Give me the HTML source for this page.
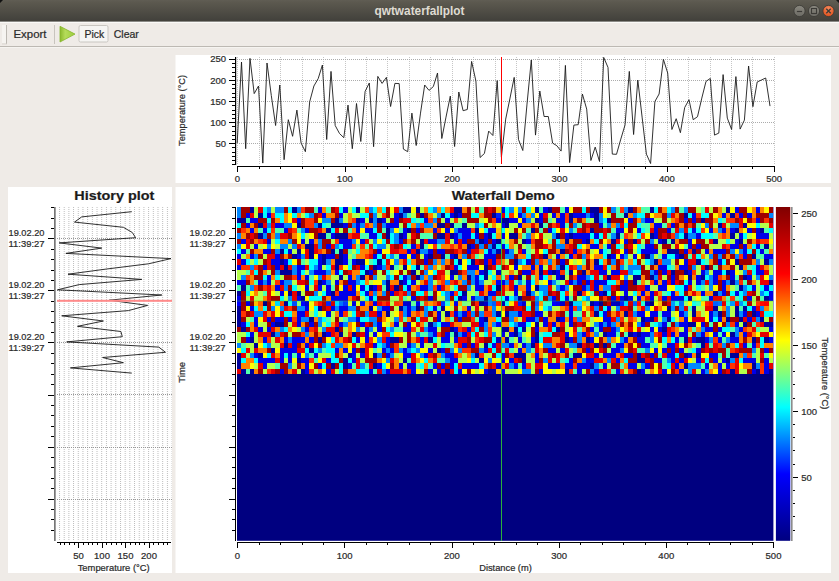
<!DOCTYPE html><html><head><meta charset="utf-8"><title>qwtwaterfallplot</title><style>html,body{margin:0;padding:0;width:839px;height:581px;overflow:hidden;background:#efebe7;font-family:"Liberation Sans",sans-serif}</style></head><body><svg width="839" height="581" viewBox="0 0 839 581" style="position:absolute;left:0;top:0" font-family="Liberation Sans, sans-serif" fill="#2b2b2b"><style>text{stroke:#2b2b2b;stroke-width:0.22px}</style>
<defs>
<linearGradient id="tb" x1="0" y1="0" x2="0" y2="1"><stop offset="0" stop-color="#605d54"/><stop offset="0.1" stop-color="#5c594f"/><stop offset="1" stop-color="#403f3a"/></linearGradient>
<linearGradient id="gr" x1="0" y1="0" x2="1" y2="0"><stop offset="0" stop-color="#8ab82c"/><stop offset="0.35" stop-color="#b5dc5a"/><stop offset="1" stop-color="#9ccc3c"/></linearGradient>
<radialGradient id="cl" cx="0.5" cy="0.3" r="0.7"><stop offset="0" stop-color="#f58a5e"/><stop offset="1" stop-color="#df4f1a"/></radialGradient>
<linearGradient id="bt" x1="0" y1="0" x2="0" y2="1"><stop offset="0" stop-color="#8a887f"/><stop offset="1" stop-color="#6b6a63"/></linearGradient>
<linearGradient id="cb" x1="0" y1="1" x2="0" y2="0"><stop offset="0" stop-color="#000080"/><stop offset="0.2" stop-color="#0000ff"/><stop offset="0.4" stop-color="#00ffff"/><stop offset="0.6" stop-color="#ffff00"/><stop offset="0.8" stop-color="#ff0000"/><stop offset="1" stop-color="#800000"/></linearGradient>
<pattern id="hg" x="56.2" y="207" width="4.69" height="2" patternUnits="userSpaceOnUse"><rect x="2.8" y="0" width="1" height="1" fill="#bcbcbc"/></pattern>
</defs>
<rect width="839" height="581" fill="#efebe7"/>
<rect x="0" y="0" width="839" height="22" fill="url(#tb)"/>
<rect x="0" y="21.6" width="839" height="1.4" fill="#faf9f7"/>
<path d="M0 0h3L0 3zM839 0h-3l3 3z" fill="#111"/>
<text x="419.5" y="14.8" text-anchor="middle" font-weight="bold" font-size="12" fill="#dfdbd2" style="stroke:none" textLength="90" lengthAdjust="spacingAndGlyphs">qwtwaterfallplot</text>
<circle cx="799.5" cy="11" r="5.6" fill="url(#bt)" stroke="#3a3935" stroke-width="0.8"/>
<circle cx="814" cy="11" r="5.6" fill="url(#bt)" stroke="#3a3935" stroke-width="0.8"/>
<circle cx="828.5" cy="11" r="5.6" fill="url(#cl)" stroke="#3a3935" stroke-width="0.8"/>
<path d="M796.9 11.5h5.2" stroke="#3c3b37" stroke-width="1.2" fill="none"/>
<rect x="811.5" y="8.5" width="5" height="5" stroke="#3c3b37" stroke-width="1.1" fill="none"/>
<path d="M826.3 8.8l4.4 4.4M830.7 8.8l-4.4 4.4" stroke="#3c3b37" stroke-width="1.3" fill="none"/>
<rect x="0" y="46" width="839" height="1" fill="#bdb9b3"/>
<rect x="0" y="47" width="839" height="1" fill="#f6f4f1"/>
<rect x="2" y="25" width="4" height="19" fill="#f6f4f1"/><rect x="6" y="25" width="1" height="19" fill="#bcb8b2"/><rect x="2" y="43.5" width="5" height="0.8" fill="#cfcbc5"/>
<rect x="54" y="25" width="1" height="19" fill="#c8c4be"/>
<text x="13.5" y="38.2" font-size="11" textLength="33" lengthAdjust="spacingAndGlyphs">Export</text>
<path d="M60 26.3L75 34.1L60 42Z" fill="url(#gr)" stroke="#86b52e" stroke-width="0.8" stroke-linejoin="round"/>
<rect x="79" y="25.5" width="29" height="16.5" rx="1.5" fill="#f6f5f3" stroke="#c9c6c1" stroke-width="1"/>
<text x="84.5" y="38.2" font-size="11" textLength="19.7" lengthAdjust="spacingAndGlyphs">Pick</text>
<text x="113.7" y="38.2" font-size="11" textLength="25.2" lengthAdjust="spacingAndGlyphs">Clear</text>
<rect x="175.5" y="55" width="655.5" height="128" fill="#fff"/>
<rect x="8" y="187" width="164" height="386" fill="#fff"/>
<rect x="175.5" y="187" width="655.5" height="386" fill="#fff"/>
<path d="M237.5 57V164M259.5 57V164M280.5 57V164M302.5 57V164M323.5 57V164M345.5 57V164M366.5 57V164M387.5 57V164M409.5 57V164M430.5 57V164M452.5 57V164M473.5 57V164M495.5 57V164M516.5 57V164M538.5 57V164M559.5 57V164M581.5 57V164M602.5 57V164M624.5 57V164M645.5 57V164M667.5 57V164M688.5 57V164M710.5 57V164M731.5 57V164M752.5 57V164M774.5 57V164" stroke="#c6c6c6" stroke-width="1" stroke-dasharray="1 1" fill="none" shape-rendering="crispEdges"/>
<path d="M237 143.5H774M237 122.5H774M237 101.5H774M237 80.5H774M237 59.5H774" stroke="#acacac" stroke-width="1" stroke-dasharray="1 1" fill="none" shape-rendering="crispEdges"/>
<path d="M235.5 57V165M232 164.5H235M232 160.5H235M232 156.5H235M232 152.5H235M232 147.5H235M229 143.5H235M232 139.5H235M232 135.5H235M232 131.5H235M232 126.5H235M229 122.5H235M232 118.5H235M232 114.5H235M232 110.5H235M232 105.5H235M229 101.5H235M232 97.5H235M232 93.5H235M232 88.5H235M232 84.5H235M229 80.5H235M232 76.5H235M232 72.5H235M232 67.5H235M232 63.5H235M229 59.5H235" stroke="#000" stroke-width="1" fill="none" shape-rendering="crispEdges"/>
<rect x="235" y="57" width="1.2" height="108" fill="#000"/>
<text x="226" y="146.6" font-size="9.5" text-anchor="end">50</text>
<text x="226" y="125.5" font-size="9.5" text-anchor="end">100</text>
<text x="226" y="104.5" font-size="9.5" text-anchor="end">150</text>
<text x="226" y="83.5" font-size="9.5" text-anchor="end">200</text>
<text x="226" y="62.4" font-size="9.5" text-anchor="end">250</text>
<text transform="translate(185.4,110.4) rotate(-90)" font-size="9.5" text-anchor="middle" textLength="71" lengthAdjust="spacingAndGlyphs">Temperature (°C)</text>
<path d="M237 166.5H774M237.5 166V172M259.5 166V169M280.5 166V169M302.5 166V169M323.5 166V169M345.5 166V172M366.5 166V169M387.5 166V169M409.5 166V169M430.5 166V169M452.5 166V172M473.5 166V169M495.5 166V169M516.5 166V169M538.5 166V169M559.5 166V172M581.5 166V169M602.5 166V169M624.5 166V169M645.5 166V169M667.5 166V172M688.5 166V169M710.5 166V169M731.5 166V169M752.5 166V169M774.5 166V172" stroke="#000" stroke-width="1" fill="none" shape-rendering="crispEdges"/>
<text x="237.5" y="181.6" font-size="9.5" text-anchor="middle">0</text>
<text x="344.8" y="181.6" font-size="9.5" text-anchor="middle">100</text>
<text x="452.2" y="181.6" font-size="9.5" text-anchor="middle">200</text>
<text x="559.5" y="181.6" font-size="9.5" text-anchor="middle">300</text>
<text x="666.9" y="181.6" font-size="9.5" text-anchor="middle">400</text>
<text x="774.2" y="181.6" font-size="9.5" text-anchor="middle">500</text>
<polyline points="237.2,143.1 241.5,62.0 245.7,148.7 250.0,58.4 254.2,93.6 258.5,86.0 262.8,163.1 267.0,63.0 271.3,95.5 275.6,125.5 279.8,85.0 284.1,159.7 288.3,119.7 292.6,136.3 296.9,110.1 301.1,143.1 305.4,151.7 309.7,101.7 313.9,86.0 318.2,78.6 322.4,65.0 326.7,139.5 331.0,71.4 335.2,125.5 339.5,133.5 343.8,137.7 348.0,105.1 352.3,148.7 356.5,103.5 360.8,141.5 365.1,91.4 369.3,83.0 373.6,146.7 377.8,76.4 382.1,83.4 386.4,77.4 390.6,106.5 394.9,83.4 399.2,83.6 403.4,149.1 407.7,151.7 411.9,113.1 416.2,145.5 420.5,113.1 424.7,85.0 429.0,90.4 433.3,86.6 437.5,73.0 441.8,138.5 446.0,117.1 450.3,96.1 454.6,146.5 458.8,92.0 463.1,110.7 467.3,109.5 471.6,61.4 475.9,81.0 480.1,157.5 484.4,153.5 488.7,131.1 492.9,135.5 497.2,80.6 501.4,157.1 505.7,119.1 510.0,98.1 514.2,77.4 518.5,139.5 522.8,150.5 527.0,104.1 531.3,60.0 535.5,135.1 539.8,91.0 544.1,116.5 548.3,116.5 552.6,143.1 556.8,145.7 561.1,151.1 565.4,65.4 569.6,162.5 573.9,125.1 578.2,124.7 582.4,94.0 586.7,109.1 590.9,160.5 595.2,147.1 599.5,161.5 603.7,57.4 608.0,67.4 612.3,154.1 616.5,154.3 620.8,139.1 625.0,125.1 629.3,71.4 633.6,134.5 637.8,80.0 642.1,117.1 646.4,154.1 650.6,163.5 654.9,101.5 659.1,94.0 663.4,59.4 667.7,73.0 671.9,129.5 676.2,118.7 680.4,132.7 684.7,107.5 689.0,99.7 693.2,119.7 697.5,116.7 701.8,98.1 706.0,81.4 710.3,78.4 714.5,135.1 718.8,133.1 723.1,74.6 727.3,118.1 731.6,129.5 735.9,76.6 740.1,129.1 744.4,120.1 748.6,66.0 752.9,106.7 757.2,82.0 761.4,80.0 765.7,78.0 770.0,106.1" fill="none" stroke="#1a1a1a" stroke-width="0.9" stroke-linejoin="round"/>
<rect x="501" y="57" width="1" height="107" fill="#ff0000"/>
<rect x="57" y="207" width="115" height="334" fill="url(#hg)"/>
<path d="M57 238.5H172M57 290.5H172M57 342.5H172M57 394.5H172M57 447.5H172M57 499.5H172" stroke="#9a9a9a" stroke-width="1" stroke-dasharray="1 1" fill="none" shape-rendering="crispEdges"/>
<text x="44.5" y="236.1" font-size="9.5" text-anchor="end" textLength="36" lengthAdjust="spacingAndGlyphs">19.02.20</text>
<text x="44.5" y="247.1" font-size="9.5" text-anchor="end" textLength="36" lengthAdjust="spacingAndGlyphs">11:39:27</text>
<text x="44.5" y="288.1" font-size="9.5" text-anchor="end" textLength="36" lengthAdjust="spacingAndGlyphs">19.02.20</text>
<text x="44.5" y="299.1" font-size="9.5" text-anchor="end" textLength="36" lengthAdjust="spacingAndGlyphs">11:39:27</text>
<text x="44.5" y="340.2" font-size="9.5" text-anchor="end" textLength="36" lengthAdjust="spacingAndGlyphs">19.02.20</text>
<text x="44.5" y="351.2" font-size="9.5" text-anchor="end" textLength="36" lengthAdjust="spacingAndGlyphs">11:39:27</text>
<path d="M51.3 207.5H54.5M51.3 218.5H54.5M51.3 228.5H54.5M48.0 238.5H54.5M51.3 249.5H54.5M51.3 259.5H54.5M51.3 270.5H54.5M51.3 280.5H54.5M48.0 290.5H54.5M51.3 301.5H54.5M51.3 311.5H54.5M51.3 322.5H54.5M51.3 332.5H54.5M48.0 342.5H54.5M51.3 353.5H54.5M51.3 363.5H54.5M51.3 374.5H54.5M51.3 384.5H54.5M48.0 395.5H54.5M51.3 405.5H54.5M51.3 415.5H54.5M51.3 426.5H54.5M51.3 436.5H54.5M48.0 447.5H54.5M51.3 457.5H54.5M51.3 467.5H54.5M51.3 478.5H54.5M51.3 488.5H54.5M48.0 499.5H54.5M51.3 509.5H54.5M51.3 519.5H54.5M51.3 530.5H54.5" stroke="#000" stroke-width="1" fill="none" shape-rendering="crispEdges"/>
<rect x="54.0" y="207" width="1.7" height="334" fill="#777"/>
<path d="M57 542.5H171M60.5 542V545M64.5 542V545M69.5 542V545M74.5 542V545M78.5 542V548M83.5 542V545M88.5 542V545M92.5 542V545M97.5 542V545M102.5 542V548M106.5 542V545M111.5 542V545M116.5 542V545M121.5 542V545M125.5 542V548M130.5 542V545M135.5 542V545M139.5 542V545M144.5 542V545M149.5 542V548M153.5 542V545M158.5 542V545M163.5 542V545M167.5 542V545" stroke="#000" stroke-width="1" fill="none" shape-rendering="crispEdges"/>
<text x="78.6" y="559.3" font-size="9.5" text-anchor="middle">50</text>
<text x="102.0" y="559.3" font-size="9.5" text-anchor="middle">100</text>
<text x="125.5" y="559.3" font-size="9.5" text-anchor="middle">150</text>
<text x="149.0" y="559.3" font-size="9.5" text-anchor="middle">200</text>
<text x="113.7" y="570.6" font-size="9.5" text-anchor="middle" textLength="72" lengthAdjust="spacingAndGlyphs">Temperature (°C)</text>
<text x="114.3" y="200.2" font-size="13" font-weight="bold" text-anchor="middle" fill="#1a1a1a" textLength="80" lengthAdjust="spacingAndGlyphs">History plot</text>
<polyline points="131.8,211.7 81.7,216.9 74.5,222.1 123.4,227.3 132.3,232.5 135.6,237.7 59.2,242.9 101.7,248.1 65.9,253.4 171.0,258.6 148.5,263.8 106.7,269.0 68.0,274.2 141.8,279.4 79.2,284.6 57.5,289.8 161.8,295.0 109.2,300.2 147.6,305.4 128.4,310.6 61.7,315.8 103.4,321.0 77.5,326.3 120.9,331.5 122.3,336.7 66.7,341.9 158.8,347.1 165.5,352.3 102.6,357.5 123.4,362.7 70.4,367.9 131.8,373.1" fill="none" stroke="#1a1a1a" stroke-width="0.9" stroke-linejoin="round"/>
<rect x="57" y="299.8" width="115" height="2" fill="#ff8a8a"/>
<text x="503.2" y="200.2" font-size="13" font-weight="bold" text-anchor="middle" fill="#1a1a1a" textLength="103" lengthAdjust="spacingAndGlyphs">Waterfall Demo</text>
<rect x="237" y="207" width="536.4" height="333.8" fill="#000080"/>
<g shape-rendering="crispEdges">
<path fill="#0087ff" d="M237 207h4v6h-4zM267 207h4v6h-4zM275 207h5v6h-5zM280 207h4v6h-4zM297 207h4v6h-4zM369 207h4v6h-4zM399 207h4v6h-4zM433 207h4v6h-4zM509 207h5v6h-5zM518 207h4v6h-4zM611 207h5v6h-5zM624 207h4v6h-4zM671 207h4v6h-4zM684 207h4v6h-4zM237 213h4v5h-4zM309 213h5v5h-5zM373 213h4v5h-4zM403 213h4v5h-4zM437 213h4v5h-4zM522 213h4v5h-4zM531 213h4v5h-4zM586 213h4v5h-4zM599 213h4v5h-4zM633 213h4v5h-4zM667 213h4v5h-4zM769 213h4v5h-4zM322 218h4v5h-4zM326 218h5v5h-5zM339 218h4v5h-4zM373 218h4v5h-4zM433 218h4v5h-4zM526 218h5v5h-5zM599 218h4v5h-4zM641 218h4v5h-4zM267 223h4v5h-4zM284 223h4v5h-4zM288 223h4v5h-4zM314 223h4v5h-4zM352 223h4v5h-4zM360 223h5v5h-5zM373 223h4v5h-4zM382 223h4v5h-4zM416 223h4v5h-4zM424 223h4v5h-4zM428 223h5v5h-5zM475 223h4v5h-4zM573 223h4v5h-4zM607 223h4v5h-4zM616 223h4v5h-4zM705 223h4v5h-4zM730 223h5v5h-5zM735 223h4v5h-4zM301 228h4v5h-4zM390 228h4v5h-4zM454 228h4v5h-4zM569 228h4v5h-4zM679 228h5v5h-5zM718 228h4v5h-4zM237 233h4v6h-4zM263 233h4v6h-4zM275 233h5v6h-5zM394 233h5v6h-5zM458 233h4v6h-4zM526 233h5v6h-5zM552 233h4v6h-4zM611 233h5v6h-5zM675 233h4v6h-4zM688 233h4v6h-4zM692 233h4v6h-4zM288 239h4v5h-4zM318 239h4v5h-4zM352 239h4v5h-4zM373 239h4v5h-4zM394 239h5v5h-5zM437 239h4v5h-4zM441 239h4v5h-4zM475 239h4v5h-4zM650 239h4v5h-4zM237 244h4v5h-4zM267 244h4v5h-4zM280 244h4v5h-4zM284 244h4v5h-4zM292 244h5v5h-5zM318 244h4v5h-4zM335 244h4v5h-4zM377 244h5v5h-5zM382 244h4v5h-4zM479 244h5v5h-5zM488 244h4v5h-4zM556 244h4v5h-4zM560 244h5v5h-5zM275 249h5v5h-5zM420 249h4v5h-4zM424 249h4v5h-4zM492 249h4v5h-4zM509 249h5v5h-5zM730 249h5v5h-5zM739 249h4v5h-4zM254 254h4v5h-4zM301 254h4v5h-4zM390 254h4v5h-4zM462 254h5v5h-5zM505 254h4v5h-4zM509 254h5v5h-5zM582 254h4v5h-4zM624 254h4v5h-4zM650 254h4v5h-4zM709 254h4v5h-4zM718 254h4v5h-4zM735 254h4v5h-4zM326 259h5v6h-5zM394 259h5v6h-5zM433 259h4v6h-4zM441 259h4v6h-4zM518 259h4v6h-4zM535 259h4v6h-4zM548 259h4v6h-4zM611 259h5v6h-5zM650 259h4v6h-4zM662 259h5v6h-5zM667 259h4v6h-4zM756 259h4v6h-4zM769 259h4v6h-4zM250 265h4v5h-4zM292 265h5v5h-5zM314 265h4v5h-4zM382 265h4v5h-4zM428 265h5v5h-5zM556 265h4v5h-4zM577 265h5v5h-5zM620 265h4v5h-4zM628 265h5v5h-5zM633 265h4v5h-4zM637 265h4v5h-4zM692 265h4v5h-4zM275 270h5v5h-5zM292 270h5v5h-5zM309 270h5v5h-5zM326 270h5v5h-5zM424 270h4v5h-4zM467 270h4v5h-4zM471 270h4v5h-4zM628 270h5v5h-5zM650 270h4v5h-4zM705 270h4v5h-4zM743 270h4v5h-4zM241 275h5v5h-5zM318 275h4v5h-4zM356 275h4v5h-4zM373 275h4v5h-4zM386 275h4v5h-4zM407 275h4v5h-4zM420 275h4v5h-4zM428 275h5v5h-5zM458 275h4v5h-4zM471 275h4v5h-4zM586 275h4v5h-4zM624 275h4v5h-4zM654 275h4v5h-4zM709 275h4v5h-4zM756 275h4v5h-4zM769 275h4v5h-4zM263 280h4v5h-4zM284 280h4v5h-4zM288 280h4v5h-4zM326 280h5v5h-5zM356 280h4v5h-4zM382 280h4v5h-4zM428 280h5v5h-5zM445 280h5v5h-5zM462 280h5v5h-5zM471 280h4v5h-4zM479 280h5v5h-5zM505 280h4v5h-4zM518 280h4v5h-4zM552 280h4v5h-4zM573 280h4v5h-4zM701 280h4v5h-4zM709 280h4v5h-4zM726 280h4v5h-4zM735 280h4v5h-4zM250 285h4v6h-4zM284 285h4v6h-4zM428 285h5v6h-5zM467 285h4v6h-4zM539 285h4v6h-4zM543 285h5v6h-5zM556 285h4v6h-4zM565 285h4v6h-4zM586 285h4v6h-4zM603 285h4v6h-4zM607 285h4v6h-4zM709 285h4v6h-4zM743 285h4v6h-4zM314 291h4v5h-4zM373 291h4v5h-4zM382 291h4v5h-4zM407 291h4v5h-4zM445 291h5v5h-5zM531 291h4v5h-4zM543 291h5v5h-5zM718 291h4v5h-4zM743 291h4v5h-4zM760 291h4v5h-4zM288 296h4v5h-4zM445 296h5v5h-5zM475 296h4v5h-4zM479 296h5v5h-5zM488 296h4v5h-4zM514 296h4v5h-4zM535 296h4v5h-4zM548 296h4v5h-4zM586 296h4v5h-4zM488 301h4v5h-4zM271 306h4v5h-4zM280 306h4v5h-4zM297 306h4v5h-4zM301 306h4v5h-4zM335 306h4v5h-4zM348 306h4v5h-4zM352 306h4v5h-4zM377 306h5v5h-5zM403 306h4v5h-4zM411 306h5v5h-5zM424 306h4v5h-4zM492 306h4v5h-4zM535 306h4v5h-4zM548 306h4v5h-4zM577 306h5v5h-5zM594 306h5v5h-5zM616 306h4v5h-4zM645 306h5v5h-5zM671 306h4v5h-4zM679 306h5v5h-5zM726 306h4v5h-4zM760 306h4v5h-4zM254 311h4v6h-4zM258 311h5v6h-5zM365 311h4v6h-4zM403 311h4v6h-4zM424 311h4v6h-4zM458 311h4v6h-4zM471 311h4v6h-4zM479 311h5v6h-5zM492 311h4v6h-4zM509 311h5v6h-5zM514 311h4v6h-4zM633 311h4v6h-4zM684 311h4v6h-4zM713 311h5v6h-5zM726 311h4v6h-4zM739 311h4v6h-4zM301 317h4v5h-4zM305 317h4v5h-4zM318 317h4v5h-4zM348 317h4v5h-4zM352 317h4v5h-4zM369 317h4v5h-4zM373 317h4v5h-4zM394 317h5v5h-5zM509 317h5v5h-5zM535 317h4v5h-4zM577 317h5v5h-5zM616 317h4v5h-4zM662 317h5v5h-5zM756 317h4v5h-4zM318 322h4v5h-4zM343 322h5v5h-5zM373 322h4v5h-4zM433 322h4v5h-4zM484 322h4v5h-4zM492 322h4v5h-4zM514 322h4v5h-4zM594 322h5v5h-5zM603 322h4v5h-4zM611 322h5v5h-5zM637 322h4v5h-4zM658 322h4v5h-4zM675 322h4v5h-4zM726 322h4v5h-4zM280 327h4v5h-4zM301 327h4v5h-4zM322 327h4v5h-4zM356 327h4v5h-4zM369 327h4v5h-4zM390 327h4v5h-4zM424 327h4v5h-4zM484 327h4v5h-4zM616 327h4v5h-4zM701 327h4v5h-4zM735 327h4v5h-4zM275 332h5v5h-5zM305 332h4v5h-4zM416 332h4v5h-4zM428 332h5v5h-5zM458 332h4v5h-4zM492 332h4v5h-4zM518 332h4v5h-4zM577 332h5v5h-5zM594 332h5v5h-5zM650 332h4v5h-4zM696 332h5v5h-5zM735 332h4v5h-4zM288 337h4v6h-4zM377 337h5v6h-5zM577 337h5v6h-5zM607 337h4v6h-4zM620 337h4v6h-4zM650 337h4v6h-4zM709 337h4v6h-4zM726 337h4v6h-4zM237 343h4v5h-4zM267 343h4v5h-4zM322 343h4v5h-4zM335 343h4v5h-4zM339 343h4v5h-4zM382 343h4v5h-4zM411 343h5v5h-5zM501 343h4v5h-4zM505 343h4v5h-4zM526 343h5v5h-5zM543 343h5v5h-5zM548 343h4v5h-4zM569 343h4v5h-4zM573 343h4v5h-4zM722 343h4v5h-4zM318 348h4v5h-4zM386 348h4v5h-4zM399 348h4v5h-4zM407 348h4v5h-4zM416 348h4v5h-4zM450 348h4v5h-4zM458 348h4v5h-4zM479 348h5v5h-5zM526 348h5v5h-5zM620 348h4v5h-4zM645 348h5v5h-5zM752 348h4v5h-4zM250 353h4v5h-4zM305 353h4v5h-4zM377 353h5v5h-5zM390 353h4v5h-4zM420 353h4v5h-4zM441 353h4v5h-4zM471 353h4v5h-4zM743 353h4v5h-4zM386 358h4v5h-4zM445 358h5v5h-5zM488 358h4v5h-4zM543 358h5v5h-5zM582 358h4v5h-4zM607 358h4v5h-4zM667 358h4v5h-4zM730 358h5v5h-5zM288 363h4v6h-4zM360 363h5v6h-5zM509 363h5v6h-5zM594 363h5v6h-5zM641 363h4v6h-4zM688 363h4v6h-4zM692 363h4v6h-4zM696 363h5v6h-5zM756 363h4v6h-4zM382 369h4v5h-4zM522 369h4v5h-4zM526 369h5v5h-5zM590 369h4v5h-4zM688 369h4v5h-4zM705 369h4v5h-4z"/>
<path fill="#a00000" d="M241 207h5v6h-5zM246 207h4v6h-4zM284 207h4v6h-4zM305 207h4v6h-4zM309 207h5v6h-5zM331 207h4v6h-4zM386 207h4v6h-4zM467 207h4v6h-4zM484 207h4v6h-4zM492 207h4v6h-4zM522 207h4v6h-4zM552 207h4v6h-4zM556 207h4v6h-4zM573 207h4v6h-4zM577 207h5v6h-5zM586 207h4v6h-4zM599 207h4v6h-4zM607 207h4v6h-4zM633 207h4v6h-4zM658 207h4v6h-4zM675 207h4v6h-4zM688 207h4v6h-4zM692 207h4v6h-4zM713 207h5v6h-5zM739 207h4v6h-4zM743 207h4v6h-4zM769 207h4v6h-4zM241 213h5v5h-5zM314 213h4v5h-4zM335 213h4v5h-4zM369 213h4v5h-4zM386 213h4v5h-4zM416 213h4v5h-4zM424 213h4v5h-4zM462 213h5v5h-5zM467 213h4v5h-4zM484 213h4v5h-4zM488 213h4v5h-4zM611 213h5v5h-5zM645 213h5v5h-5zM662 213h5v5h-5zM679 213h5v5h-5zM709 213h4v5h-4zM743 213h4v5h-4zM756 213h4v5h-4zM760 213h4v5h-4zM764 213h5v5h-5zM258 218h5v5h-5zM263 218h4v5h-4zM271 218h4v5h-4zM301 218h4v5h-4zM314 218h4v5h-4zM331 218h4v5h-4zM390 218h4v5h-4zM399 218h4v5h-4zM437 218h4v5h-4zM467 218h4v5h-4zM471 218h4v5h-4zM475 218h4v5h-4zM488 218h4v5h-4zM543 218h5v5h-5zM577 218h5v5h-5zM611 218h5v5h-5zM616 218h4v5h-4zM620 218h4v5h-4zM633 218h4v5h-4zM662 218h5v5h-5zM679 218h5v5h-5zM688 218h4v5h-4zM696 218h5v5h-5zM705 218h4v5h-4zM709 218h4v5h-4zM735 218h4v5h-4zM747 218h5v5h-5zM760 218h4v5h-4zM769 218h4v5h-4zM241 223h5v5h-5zM254 223h4v5h-4zM301 223h4v5h-4zM348 223h4v5h-4zM377 223h5v5h-5zM403 223h4v5h-4zM445 223h5v5h-5zM484 223h4v5h-4zM548 223h4v5h-4zM569 223h4v5h-4zM582 223h4v5h-4zM590 223h4v5h-4zM594 223h5v5h-5zM628 223h5v5h-5zM633 223h4v5h-4zM675 223h4v5h-4zM684 223h4v5h-4zM692 223h4v5h-4zM709 223h4v5h-4zM237 228h4v5h-4zM309 228h5v5h-5zM314 228h4v5h-4zM343 228h5v5h-5zM377 228h5v5h-5zM411 228h5v5h-5zM420 228h4v5h-4zM514 228h4v5h-4zM522 228h4v5h-4zM535 228h4v5h-4zM543 228h5v5h-5zM582 228h4v5h-4zM594 228h5v5h-5zM599 228h4v5h-4zM607 228h4v5h-4zM628 228h5v5h-5zM658 228h4v5h-4zM662 228h5v5h-5zM752 228h4v5h-4zM246 233h4v6h-4zM254 233h4v6h-4zM267 233h4v6h-4zM288 233h4v6h-4zM314 233h4v6h-4zM382 233h4v6h-4zM416 233h4v6h-4zM433 233h4v6h-4zM479 233h5v6h-5zM560 233h5v6h-5zM658 233h4v6h-4zM667 233h4v6h-4zM237 239h4v5h-4zM250 239h4v5h-4zM292 239h5v5h-5zM322 239h4v5h-4zM326 239h5v5h-5zM386 239h4v5h-4zM403 239h4v5h-4zM411 239h5v5h-5zM467 239h4v5h-4zM471 239h4v5h-4zM488 239h4v5h-4zM514 239h4v5h-4zM535 239h4v5h-4zM539 239h4v5h-4zM552 239h4v5h-4zM573 239h4v5h-4zM577 239h5v5h-5zM599 239h4v5h-4zM628 239h5v5h-5zM645 239h5v5h-5zM679 239h5v5h-5zM684 239h4v5h-4zM696 239h5v5h-5zM701 239h4v5h-4zM747 239h5v5h-5zM322 244h4v5h-4zM394 244h5v5h-5zM475 244h4v5h-4zM484 244h4v5h-4zM518 244h4v5h-4zM535 244h4v5h-4zM539 244h4v5h-4zM552 244h4v5h-4zM573 244h4v5h-4zM611 244h5v5h-5zM624 244h4v5h-4zM654 244h4v5h-4zM662 244h5v5h-5zM667 244h4v5h-4zM692 244h4v5h-4zM701 244h4v5h-4zM705 244h4v5h-4zM739 244h4v5h-4zM250 249h4v5h-4zM271 249h4v5h-4zM326 249h5v5h-5zM343 249h5v5h-5zM373 249h4v5h-4zM433 249h4v5h-4zM445 249h5v5h-5zM450 249h4v5h-4zM462 249h5v5h-5zM501 249h4v5h-4zM548 249h4v5h-4zM552 249h4v5h-4zM565 249h4v5h-4zM586 249h4v5h-4zM611 249h5v5h-5zM628 249h5v5h-5zM679 249h5v5h-5zM696 249h5v5h-5zM726 249h4v5h-4zM752 249h4v5h-4zM258 254h5v5h-5zM280 254h4v5h-4zM288 254h4v5h-4zM335 254h4v5h-4zM382 254h4v5h-4zM416 254h4v5h-4zM433 254h4v5h-4zM437 254h4v5h-4zM467 254h4v5h-4zM501 254h4v5h-4zM514 254h4v5h-4zM531 254h4v5h-4zM539 254h4v5h-4zM577 254h5v5h-5zM641 254h4v5h-4zM684 254h4v5h-4zM713 254h5v5h-5zM722 254h4v5h-4zM730 254h5v5h-5zM747 254h5v5h-5zM263 259h4v6h-4zM297 259h4v6h-4zM416 259h4v6h-4zM420 259h4v6h-4zM428 259h5v6h-5zM450 259h4v6h-4zM479 259h5v6h-5zM509 259h5v6h-5zM531 259h4v6h-4zM556 259h4v6h-4zM565 259h4v6h-4zM586 259h4v6h-4zM607 259h4v6h-4zM616 259h4v6h-4zM637 259h4v6h-4zM675 259h4v6h-4zM713 259h5v6h-5zM726 259h4v6h-4zM739 259h4v6h-4zM743 259h4v6h-4zM747 259h5v6h-5zM258 265h5v5h-5zM271 265h4v5h-4zM352 265h4v5h-4zM369 265h4v5h-4zM445 265h5v5h-5zM488 265h4v5h-4zM501 265h4v5h-4zM586 265h4v5h-4zM616 265h4v5h-4zM641 265h4v5h-4zM650 265h4v5h-4zM688 265h4v5h-4zM709 265h4v5h-4zM718 265h4v5h-4zM730 265h5v5h-5zM258 270h5v5h-5zM271 270h4v5h-4zM343 270h5v5h-5zM373 270h4v5h-4zM382 270h4v5h-4zM399 270h4v5h-4zM407 270h4v5h-4zM420 270h4v5h-4zM458 270h4v5h-4zM518 270h4v5h-4zM577 270h5v5h-5zM641 270h4v5h-4zM645 270h5v5h-5zM658 270h4v5h-4zM675 270h4v5h-4zM679 270h5v5h-5zM254 275h4v5h-4zM258 275h5v5h-5zM284 275h4v5h-4zM288 275h4v5h-4zM369 275h4v5h-4zM394 275h5v5h-5zM411 275h5v5h-5zM433 275h4v5h-4zM514 275h4v5h-4zM526 275h5v5h-5zM569 275h4v5h-4zM645 275h5v5h-5zM667 275h4v5h-4zM675 275h4v5h-4zM726 275h4v5h-4zM739 275h4v5h-4zM246 280h4v5h-4zM305 280h4v5h-4zM343 280h5v5h-5zM467 280h4v5h-4zM582 280h4v5h-4zM620 280h4v5h-4zM628 280h5v5h-5zM679 280h5v5h-5zM718 280h4v5h-4zM747 280h5v5h-5zM258 285h5v6h-5zM288 285h4v6h-4zM335 285h4v6h-4zM399 285h4v6h-4zM458 285h4v6h-4zM462 285h5v6h-5zM573 285h4v6h-4zM577 285h5v6h-5zM616 285h4v6h-4zM628 285h5v6h-5zM633 285h4v6h-4zM718 285h4v6h-4zM241 291h5v5h-5zM305 291h4v5h-4zM309 291h5v5h-5zM386 291h4v5h-4zM411 291h5v5h-5zM433 291h4v5h-4zM548 291h4v5h-4zM556 291h4v5h-4zM594 291h5v5h-5zM611 291h5v5h-5zM684 291h4v5h-4zM726 291h4v5h-4zM752 291h4v5h-4zM241 296h5v5h-5zM271 296h4v5h-4zM275 296h5v5h-5zM322 296h4v5h-4zM356 296h4v5h-4zM377 296h5v5h-5zM382 296h4v5h-4zM386 296h4v5h-4zM416 296h4v5h-4zM424 296h4v5h-4zM433 296h4v5h-4zM450 296h4v5h-4zM522 296h4v5h-4zM526 296h5v5h-5zM543 296h5v5h-5zM556 296h4v5h-4zM573 296h4v5h-4zM599 296h4v5h-4zM607 296h4v5h-4zM743 296h4v5h-4zM756 296h4v5h-4zM241 301h5v5h-5zM267 301h4v5h-4zM241 306h5v5h-5zM267 306h4v5h-4zM292 306h5v5h-5zM322 306h4v5h-4zM356 306h4v5h-4zM390 306h4v5h-4zM420 306h4v5h-4zM454 306h4v5h-4zM484 306h4v5h-4zM505 306h4v5h-4zM509 306h5v5h-5zM522 306h4v5h-4zM531 306h4v5h-4zM599 306h4v5h-4zM628 306h5v5h-5zM675 306h4v5h-4zM246 311h4v6h-4zM360 311h5v6h-5zM428 311h5v6h-5zM475 311h4v6h-4zM531 311h4v6h-4zM548 311h4v6h-4zM560 311h5v6h-5zM607 311h4v6h-4zM722 311h4v6h-4zM747 311h5v6h-5zM241 317h5v5h-5zM271 317h4v5h-4zM284 317h4v5h-4zM335 317h4v5h-4zM377 317h5v5h-5zM411 317h5v5h-5zM433 317h4v5h-4zM454 317h4v5h-4zM462 317h5v5h-5zM467 317h4v5h-4zM501 317h4v5h-4zM505 317h4v5h-4zM539 317h4v5h-4zM730 317h5v5h-5zM735 317h4v5h-4zM769 317h4v5h-4zM267 322h4v5h-4zM284 322h4v5h-4zM305 322h4v5h-4zM314 322h4v5h-4zM356 322h4v5h-4zM369 322h4v5h-4zM403 322h4v5h-4zM573 322h4v5h-4zM582 322h4v5h-4zM620 322h4v5h-4zM628 322h5v5h-5zM645 322h5v5h-5zM671 322h4v5h-4zM705 322h4v5h-4zM713 322h5v5h-5zM722 322h4v5h-4zM747 322h5v5h-5zM237 327h4v5h-4zM246 327h4v5h-4zM339 327h4v5h-4zM382 327h4v5h-4zM441 327h4v5h-4zM445 327h5v5h-5zM479 327h5v5h-5zM531 327h4v5h-4zM560 327h5v5h-5zM586 327h4v5h-4zM603 327h4v5h-4zM607 327h4v5h-4zM713 327h5v5h-5zM284 332h4v5h-4zM292 332h5v5h-5zM297 332h4v5h-4zM314 332h4v5h-4zM356 332h4v5h-4zM407 332h4v5h-4zM441 332h4v5h-4zM531 332h4v5h-4zM552 332h4v5h-4zM556 332h4v5h-4zM620 332h4v5h-4zM692 332h4v5h-4zM241 337h5v6h-5zM314 337h4v6h-4zM322 337h4v6h-4zM348 337h4v6h-4zM399 337h4v6h-4zM407 337h4v6h-4zM467 337h4v6h-4zM484 337h4v6h-4zM488 337h4v6h-4zM573 337h4v6h-4zM599 337h4v6h-4zM633 337h4v6h-4zM658 337h4v6h-4zM743 337h4v6h-4zM756 337h4v6h-4zM297 343h4v5h-4zM318 343h4v5h-4zM390 343h4v5h-4zM467 343h4v5h-4zM560 343h5v5h-5zM586 343h4v5h-4zM599 343h4v5h-4zM607 343h4v5h-4zM628 343h5v5h-5zM637 343h4v5h-4zM684 343h4v5h-4zM726 343h4v5h-4zM267 348h4v5h-4zM356 348h4v5h-4zM445 348h5v5h-5zM471 348h4v5h-4zM475 348h4v5h-4zM543 348h5v5h-5zM582 348h4v5h-4zM590 348h4v5h-4zM603 348h4v5h-4zM628 348h5v5h-5zM667 348h4v5h-4zM675 348h4v5h-4zM701 348h4v5h-4zM709 348h4v5h-4zM718 348h4v5h-4zM722 348h4v5h-4zM739 348h4v5h-4zM743 348h4v5h-4zM747 348h5v5h-5zM760 348h4v5h-4zM769 348h4v5h-4zM335 353h4v5h-4zM382 353h4v5h-4zM433 353h4v5h-4zM492 353h4v5h-4zM505 353h4v5h-4zM552 353h4v5h-4zM565 353h4v5h-4zM633 353h4v5h-4zM645 353h5v5h-5zM654 353h4v5h-4zM679 353h5v5h-5zM722 353h4v5h-4zM339 358h4v5h-4zM365 358h4v5h-4zM369 358h4v5h-4zM373 358h4v5h-4zM518 358h4v5h-4zM539 358h4v5h-4zM573 358h4v5h-4zM628 358h5v5h-5zM633 358h4v5h-4zM650 358h4v5h-4zM709 358h4v5h-4zM760 358h4v5h-4zM280 363h4v6h-4zM284 363h4v6h-4zM297 363h4v6h-4zM314 363h4v6h-4zM326 363h5v6h-5zM335 363h4v6h-4zM390 363h4v6h-4zM437 363h4v6h-4zM445 363h5v6h-5zM488 363h4v6h-4zM611 363h5v6h-5zM616 363h4v6h-4zM650 363h4v6h-4zM658 363h4v6h-4zM258 369h5v5h-5zM275 369h5v5h-5zM284 369h4v5h-4zM343 369h5v5h-5zM424 369h4v5h-4zM467 369h4v5h-4zM535 369h4v5h-4zM586 369h4v5h-4zM633 369h4v5h-4zM671 369h4v5h-4zM722 369h4v5h-4zM747 369h5v5h-5z"/>
<path fill="#000099" d="M250 207h4v6h-4zM292 207h5v6h-5zM356 207h4v6h-4zM403 207h4v6h-4zM407 207h4v6h-4zM416 207h4v6h-4zM454 207h4v6h-4zM458 207h4v6h-4zM535 207h4v6h-4zM548 207h4v6h-4zM590 207h4v6h-4zM594 207h5v6h-5zM628 207h5v6h-5zM650 207h4v6h-4zM726 207h4v6h-4zM258 213h5v5h-5zM399 213h4v5h-4zM420 213h4v5h-4zM441 213h4v5h-4zM454 213h4v5h-4zM492 213h4v5h-4zM569 213h4v5h-4zM594 213h5v5h-5zM624 213h4v5h-4zM684 213h4v5h-4zM730 213h5v5h-5zM237 218h4v5h-4zM241 218h5v5h-5zM335 218h4v5h-4zM356 218h4v5h-4zM369 218h4v5h-4zM377 218h5v5h-5zM501 218h4v5h-4zM505 218h4v5h-4zM535 218h4v5h-4zM569 218h4v5h-4zM594 218h5v5h-5zM607 218h4v5h-4zM701 218h4v5h-4zM258 223h5v5h-5zM297 223h4v5h-4zM318 223h4v5h-4zM331 223h4v5h-4zM335 223h4v5h-4zM339 223h4v5h-4zM437 223h4v5h-4zM441 223h4v5h-4zM450 223h4v5h-4zM462 223h5v5h-5zM505 223h4v5h-4zM539 223h4v5h-4zM718 223h4v5h-4zM743 223h4v5h-4zM326 228h5v5h-5zM386 228h4v5h-4zM407 228h4v5h-4zM475 228h4v5h-4zM531 228h4v5h-4zM590 228h4v5h-4zM735 228h4v5h-4zM760 228h4v5h-4zM258 233h5v6h-5zM318 233h4v6h-4zM322 233h4v6h-4zM335 233h4v6h-4zM339 233h4v6h-4zM343 233h5v6h-5zM386 233h4v6h-4zM399 233h4v6h-4zM437 233h4v6h-4zM441 233h4v6h-4zM450 233h4v6h-4zM488 233h4v6h-4zM509 233h5v6h-5zM514 233h4v6h-4zM556 233h4v6h-4zM569 233h4v6h-4zM616 233h4v6h-4zM650 233h4v6h-4zM684 233h4v6h-4zM730 233h5v6h-5zM420 239h4v5h-4zM479 239h5v5h-5zM496 239h5v5h-5zM522 239h4v5h-4zM565 239h4v5h-4zM586 239h4v5h-4zM611 239h5v5h-5zM633 239h4v5h-4zM662 239h5v5h-5zM671 239h4v5h-4zM713 239h5v5h-5zM739 239h4v5h-4zM305 244h4v5h-4zM309 244h5v5h-5zM420 244h4v5h-4zM467 244h4v5h-4zM492 244h4v5h-4zM764 244h5v5h-5zM280 249h4v5h-4zM297 249h4v5h-4zM309 249h5v5h-5zM331 249h4v5h-4zM339 249h4v5h-4zM416 249h4v5h-4zM560 249h5v5h-5zM667 249h4v5h-4zM671 249h4v5h-4zM675 249h4v5h-4zM692 249h4v5h-4zM292 254h5v5h-5zM309 254h5v5h-5zM322 254h4v5h-4zM339 254h4v5h-4zM428 254h5v5h-5zM441 254h4v5h-4zM454 254h4v5h-4zM543 254h5v5h-5zM607 254h4v5h-4zM645 254h5v5h-5zM679 254h5v5h-5zM752 254h4v5h-4zM280 259h4v6h-4zM322 259h4v6h-4zM335 259h4v6h-4zM339 259h4v6h-4zM356 259h4v6h-4zM360 259h5v6h-5zM377 259h5v6h-5zM458 259h4v6h-4zM471 259h4v6h-4zM514 259h4v6h-4zM594 259h5v6h-5zM654 259h4v6h-4zM696 259h5v6h-5zM735 259h4v6h-4zM764 259h5v6h-5zM284 265h4v5h-4zM335 265h4v5h-4zM373 265h4v5h-4zM390 265h4v5h-4zM403 265h4v5h-4zM416 265h4v5h-4zM484 265h4v5h-4zM560 265h5v5h-5zM705 265h4v5h-4zM739 265h4v5h-4zM280 270h4v5h-4zM284 270h4v5h-4zM288 270h4v5h-4zM365 270h4v5h-4zM411 270h5v5h-5zM450 270h4v5h-4zM454 270h4v5h-4zM484 270h4v5h-4zM539 270h4v5h-4zM552 270h4v5h-4zM569 270h4v5h-4zM582 270h4v5h-4zM671 270h4v5h-4zM684 270h4v5h-4zM726 270h4v5h-4zM339 275h4v5h-4zM360 275h5v5h-5zM416 275h4v5h-4zM467 275h4v5h-4zM484 275h4v5h-4zM518 275h4v5h-4zM560 275h5v5h-5zM607 275h4v5h-4zM633 275h4v5h-4zM637 275h4v5h-4zM650 275h4v5h-4zM688 275h4v5h-4zM701 275h4v5h-4zM743 275h4v5h-4zM318 280h4v5h-4zM386 280h4v5h-4zM399 280h4v5h-4zM633 280h4v5h-4zM730 280h5v5h-5zM769 280h4v5h-4zM241 285h5v6h-5zM369 285h4v6h-4zM386 285h4v6h-4zM394 285h5v6h-5zM535 285h4v6h-4zM739 285h4v6h-4zM237 291h4v5h-4zM288 291h4v5h-4zM297 291h4v5h-4zM331 291h4v5h-4zM462 291h5v5h-5zM526 291h5v5h-5zM577 291h5v5h-5zM603 291h4v5h-4zM713 291h5v5h-5zM301 296h4v5h-4zM458 296h4v5h-4zM484 296h4v5h-4zM518 296h4v5h-4zM624 296h4v5h-4zM688 296h4v5h-4zM764 296h5v5h-5zM284 301h4v5h-4zM590 301h4v5h-4zM237 306h4v5h-4zM318 306h4v5h-4zM369 306h4v5h-4zM399 306h4v5h-4zM416 306h4v5h-4zM441 306h4v5h-4zM667 306h4v5h-4zM692 306h4v5h-4zM713 306h5v5h-5zM735 306h4v5h-4zM743 306h4v5h-4zM237 311h4v6h-4zM386 311h4v6h-4zM445 311h5v6h-5zM505 311h4v6h-4zM594 311h5v6h-5zM624 311h4v6h-4zM692 311h4v6h-4zM718 311h4v6h-4zM735 311h4v6h-4zM752 311h4v6h-4zM237 317h4v5h-4zM309 317h5v5h-5zM484 317h4v5h-4zM556 317h4v5h-4zM641 317h4v5h-4zM650 317h4v5h-4zM667 317h4v5h-4zM726 317h4v5h-4zM739 317h4v5h-4zM760 317h4v5h-4zM237 322h4v5h-4zM275 322h5v5h-5zM280 322h4v5h-4zM428 322h5v5h-5zM535 322h4v5h-4zM688 322h4v5h-4zM692 322h4v5h-4zM743 322h4v5h-4zM764 322h5v5h-5zM769 322h4v5h-4zM241 327h5v5h-5zM335 327h4v5h-4zM450 327h4v5h-4zM501 327h4v5h-4zM505 327h4v5h-4zM514 327h4v5h-4zM522 327h4v5h-4zM556 327h4v5h-4zM662 327h5v5h-5zM271 332h4v5h-4zM322 332h4v5h-4zM339 332h4v5h-4zM352 332h4v5h-4zM454 332h4v5h-4zM514 332h4v5h-4zM535 332h4v5h-4zM603 332h4v5h-4zM628 332h5v5h-5zM637 332h4v5h-4zM730 332h5v5h-5zM250 337h4v6h-4zM318 337h4v6h-4zM390 337h4v6h-4zM394 337h5v6h-5zM428 337h5v6h-5zM505 337h4v6h-4zM535 337h4v6h-4zM565 337h4v6h-4zM586 337h4v6h-4zM684 337h4v6h-4zM696 337h5v6h-5zM701 337h4v6h-4zM752 337h4v6h-4zM764 337h5v6h-5zM254 343h4v5h-4zM284 343h4v5h-4zM484 343h4v5h-4zM531 343h4v5h-4zM577 343h5v5h-5zM594 343h5v5h-5zM603 343h4v5h-4zM701 343h4v5h-4zM271 348h4v5h-4zM309 348h5v5h-5zM360 348h5v5h-5zM437 348h4v5h-4zM237 353h4v5h-4zM258 353h5v5h-5zM348 353h4v5h-4zM373 353h4v5h-4zM475 353h4v5h-4zM514 353h4v5h-4zM518 353h4v5h-4zM522 353h4v5h-4zM573 353h4v5h-4zM577 353h5v5h-5zM637 353h4v5h-4zM684 353h4v5h-4zM696 353h5v5h-5zM730 353h5v5h-5zM735 353h4v5h-4zM237 358h4v5h-4zM297 358h4v5h-4zM343 358h5v5h-5zM403 358h4v5h-4zM479 358h5v5h-5zM522 358h4v5h-4zM637 358h4v5h-4zM641 358h4v5h-4zM726 358h4v5h-4zM237 363h4v6h-4zM331 363h4v6h-4zM343 363h5v6h-5zM373 363h4v6h-4zM590 363h4v6h-4zM684 363h4v6h-4zM752 363h4v6h-4zM241 369h5v5h-5zM250 369h4v5h-4zM301 369h4v5h-4zM445 369h5v5h-5zM488 369h4v5h-4zM492 369h4v5h-4zM565 369h4v5h-4zM637 369h4v5h-4zM730 369h5v5h-5zM756 369h4v5h-4zM769 369h4v5h-4z"/>
<path fill="#b4ff4b" d="M254 207h4v6h-4zM271 207h4v6h-4zM348 207h4v6h-4zM360 207h5v6h-5zM420 207h4v6h-4zM471 207h4v6h-4zM696 207h5v6h-5zM709 207h4v6h-4zM722 207h4v6h-4zM254 213h4v5h-4zM301 213h4v5h-4zM343 213h5v5h-5zM352 213h4v5h-4zM356 213h4v5h-4zM377 213h5v5h-5zM390 213h4v5h-4zM411 213h5v5h-5zM433 213h4v5h-4zM548 213h4v5h-4zM607 213h4v5h-4zM343 218h5v5h-5zM365 218h4v5h-4zM386 218h4v5h-4zM441 218h4v5h-4zM450 218h4v5h-4zM458 218h4v5h-4zM479 218h5v5h-5zM531 218h4v5h-4zM552 218h4v5h-4zM590 218h4v5h-4zM654 218h4v5h-4zM658 218h4v5h-4zM667 218h4v5h-4zM399 223h4v5h-4zM467 223h4v5h-4zM471 223h4v5h-4zM488 223h4v5h-4zM509 223h5v5h-5zM514 223h4v5h-4zM713 223h5v5h-5zM726 223h4v5h-4zM760 223h4v5h-4zM764 223h5v5h-5zM339 228h4v5h-4zM509 228h5v5h-5zM305 233h4v6h-4zM407 233h4v6h-4zM543 233h5v6h-5zM548 233h4v6h-4zM633 233h4v6h-4zM735 233h4v6h-4zM747 233h5v6h-5zM769 233h4v6h-4zM271 239h4v5h-4zM305 239h4v5h-4zM331 239h4v5h-4zM369 239h4v5h-4zM416 239h4v5h-4zM450 239h4v5h-4zM505 239h4v5h-4zM518 239h4v5h-4zM641 239h4v5h-4zM654 239h4v5h-4zM705 239h4v5h-4zM718 239h4v5h-4zM722 239h4v5h-4zM730 239h5v5h-5zM743 239h4v5h-4zM250 244h4v5h-4zM258 244h5v5h-5zM275 244h5v5h-5zM288 244h4v5h-4zM386 244h4v5h-4zM514 244h4v5h-4zM522 244h4v5h-4zM658 244h4v5h-4zM671 244h4v5h-4zM709 244h4v5h-4zM713 244h5v5h-5zM718 244h4v5h-4zM769 244h4v5h-4zM292 249h5v5h-5zM352 249h4v5h-4zM514 249h4v5h-4zM531 249h4v5h-4zM590 249h4v5h-4zM633 249h4v5h-4zM658 249h4v5h-4zM701 249h4v5h-4zM241 254h5v5h-5zM263 254h4v5h-4zM348 254h4v5h-4zM420 254h4v5h-4zM479 254h5v5h-5zM552 254h4v5h-4zM628 254h5v5h-5zM654 254h4v5h-4zM705 254h4v5h-4zM250 259h4v6h-4zM258 259h5v6h-5zM305 259h4v6h-4zM505 259h4v6h-4zM573 259h4v6h-4zM641 259h4v6h-4zM671 259h4v6h-4zM760 259h4v6h-4zM322 265h4v5h-4zM399 265h4v5h-4zM437 265h4v5h-4zM543 265h5v5h-5zM645 265h5v5h-5zM696 265h5v5h-5zM735 265h4v5h-4zM769 265h4v5h-4zM237 270h4v5h-4zM241 270h5v5h-5zM267 270h4v5h-4zM305 270h4v5h-4zM377 270h5v5h-5zM390 270h4v5h-4zM403 270h4v5h-4zM416 270h4v5h-4zM445 270h5v5h-5zM492 270h4v5h-4zM501 270h4v5h-4zM505 270h4v5h-4zM514 270h4v5h-4zM607 270h4v5h-4zM696 270h5v5h-5zM709 270h4v5h-4zM739 270h4v5h-4zM769 270h4v5h-4zM237 275h4v5h-4zM280 275h4v5h-4zM331 275h4v5h-4zM335 275h4v5h-4zM343 275h5v5h-5zM377 275h5v5h-5zM382 275h4v5h-4zM454 275h4v5h-4zM488 275h4v5h-4zM522 275h4v5h-4zM552 275h4v5h-4zM565 275h4v5h-4zM628 275h5v5h-5zM662 275h5v5h-5zM752 275h4v5h-4zM271 280h4v5h-4zM292 280h5v5h-5zM331 280h4v5h-4zM369 280h4v5h-4zM416 280h4v5h-4zM433 280h4v5h-4zM484 280h4v5h-4zM488 280h4v5h-4zM539 280h4v5h-4zM560 280h5v5h-5zM645 280h5v5h-5zM692 280h4v5h-4zM756 280h4v5h-4zM297 285h4v6h-4zM309 285h5v6h-5zM322 285h4v6h-4zM450 285h4v6h-4zM471 285h4v6h-4zM552 285h4v6h-4zM650 285h4v6h-4zM654 285h4v6h-4zM692 285h4v6h-4zM705 285h4v6h-4zM730 285h5v6h-5zM756 285h4v6h-4zM258 291h5v5h-5zM275 291h5v5h-5zM301 291h4v5h-4zM318 291h4v5h-4zM467 291h4v5h-4zM471 291h4v5h-4zM505 291h4v5h-4zM509 291h5v5h-5zM518 291h4v5h-4zM535 291h4v5h-4zM569 291h4v5h-4zM620 291h4v5h-4zM628 291h5v5h-5zM756 291h4v5h-4zM246 296h4v5h-4zM254 296h4v5h-4zM258 296h5v5h-5zM284 296h4v5h-4zM360 296h5v5h-5zM390 296h4v5h-4zM394 296h5v5h-5zM407 296h4v5h-4zM437 296h4v5h-4zM441 296h4v5h-4zM467 296h4v5h-4zM577 296h5v5h-5zM633 296h4v5h-4zM654 296h4v5h-4zM692 296h4v5h-4zM752 296h4v5h-4zM390 301h4v5h-4zM752 301h4v5h-4zM769 301h4v5h-4zM394 306h5v5h-5zM450 306h4v5h-4zM458 306h4v5h-4zM471 306h4v5h-4zM479 306h5v5h-5zM552 306h4v5h-4zM556 306h4v5h-4zM611 306h5v5h-5zM696 306h5v5h-5zM701 306h4v5h-4zM718 306h4v5h-4zM730 306h5v5h-5zM769 306h4v5h-4zM309 311h5v6h-5zM318 311h4v6h-4zM331 311h4v6h-4zM348 311h4v6h-4zM390 311h4v6h-4zM441 311h4v6h-4zM543 311h5v6h-5zM586 311h4v6h-4zM671 311h4v6h-4zM688 311h4v6h-4zM701 311h4v6h-4zM730 311h5v6h-5zM246 317h4v5h-4zM331 317h4v5h-4zM339 317h4v5h-4zM390 317h4v5h-4zM428 317h5v5h-5zM441 317h4v5h-4zM518 317h4v5h-4zM590 317h4v5h-4zM624 317h4v5h-4zM637 317h4v5h-4zM658 317h4v5h-4zM675 317h4v5h-4zM764 317h5v5h-5zM258 322h5v5h-5zM263 322h4v5h-4zM288 322h4v5h-4zM322 322h4v5h-4zM386 322h4v5h-4zM399 322h4v5h-4zM462 322h5v5h-5zM467 322h4v5h-4zM539 322h4v5h-4zM565 322h4v5h-4zM590 322h4v5h-4zM739 322h4v5h-4zM263 327h4v5h-4zM297 327h4v5h-4zM318 327h4v5h-4zM343 327h5v5h-5zM360 327h5v5h-5zM373 327h4v5h-4zM416 327h4v5h-4zM437 327h4v5h-4zM492 327h4v5h-4zM526 327h5v5h-5zM565 327h4v5h-4zM641 327h4v5h-4zM679 327h5v5h-5zM760 327h4v5h-4zM764 327h5v5h-5zM237 332h4v5h-4zM241 332h5v5h-5zM254 332h4v5h-4zM288 332h4v5h-4zM343 332h5v5h-5zM369 332h4v5h-4zM403 332h4v5h-4zM411 332h5v5h-5zM479 332h5v5h-5zM505 332h4v5h-4zM522 332h4v5h-4zM599 332h4v5h-4zM688 332h4v5h-4zM237 337h4v6h-4zM254 337h4v6h-4zM271 337h4v6h-4zM403 337h4v6h-4zM437 337h4v6h-4zM450 337h4v6h-4zM471 337h4v6h-4zM514 337h4v6h-4zM526 337h5v6h-5zM246 343h4v5h-4zM250 343h4v5h-4zM271 343h4v5h-4zM275 343h5v5h-5zM356 343h4v5h-4zM399 343h4v5h-4zM403 343h4v5h-4zM416 343h4v5h-4zM424 343h4v5h-4zM428 343h5v5h-5zM437 343h4v5h-4zM479 343h5v5h-5zM518 343h4v5h-4zM565 343h4v5h-4zM692 343h4v5h-4zM250 348h4v5h-4zM377 348h5v5h-5zM433 348h4v5h-4zM514 348h4v5h-4zM556 348h4v5h-4zM569 348h4v5h-4zM607 348h4v5h-4zM684 348h4v5h-4zM756 348h4v5h-4zM246 353h4v5h-4zM318 353h4v5h-4zM322 353h4v5h-4zM326 353h5v5h-5zM343 353h5v5h-5zM356 353h4v5h-4zM394 353h5v5h-5zM462 353h5v5h-5zM484 353h4v5h-4zM488 353h4v5h-4zM526 353h5v5h-5zM543 353h5v5h-5zM599 353h4v5h-4zM756 353h4v5h-4zM284 358h4v5h-4zM360 358h5v5h-5zM399 358h4v5h-4zM458 358h4v5h-4zM462 358h5v5h-5zM475 358h4v5h-4zM526 358h5v5h-5zM531 358h4v5h-4zM552 358h4v5h-4zM692 358h4v5h-4zM718 358h4v5h-4zM756 358h4v5h-4zM769 358h4v5h-4zM254 363h4v6h-4zM267 363h4v6h-4zM271 363h4v6h-4zM292 363h5v6h-5zM403 363h4v6h-4zM531 363h4v6h-4zM607 363h4v6h-4zM637 363h4v6h-4zM709 363h4v6h-4zM722 363h4v6h-4zM263 369h4v5h-4zM297 369h4v5h-4zM314 369h4v5h-4zM335 369h4v5h-4zM420 369h4v5h-4zM433 369h4v5h-4zM475 369h4v5h-4zM505 369h4v5h-4zM509 369h5v5h-5zM514 369h4v5h-4zM531 369h4v5h-4zM552 369h4v5h-4zM582 369h4v5h-4zM624 369h4v5h-4zM645 369h5v5h-5zM684 369h4v5h-4zM696 369h5v5h-5zM739 369h4v5h-4zM743 369h4v5h-4z"/>
<path fill="#e60000" d="M258 207h5v6h-5zM335 207h4v6h-4zM394 207h5v6h-5zM450 207h4v6h-4zM475 207h4v6h-4zM488 207h4v6h-4zM705 207h4v6h-4zM250 213h4v5h-4zM318 213h4v5h-4zM501 213h4v5h-4zM543 213h5v5h-5zM671 213h4v5h-4zM292 218h5v5h-5zM403 218h4v5h-4zM407 218h4v5h-4zM739 218h4v5h-4zM263 223h4v5h-4zM271 223h4v5h-4zM531 223h4v5h-4zM556 223h4v5h-4zM586 223h4v5h-4zM620 223h4v5h-4zM722 223h4v5h-4zM739 223h4v5h-4zM769 223h4v5h-4zM288 228h4v5h-4zM318 228h4v5h-4zM335 228h4v5h-4zM560 228h5v5h-5zM577 228h5v5h-5zM603 228h4v5h-4zM650 228h4v5h-4zM675 228h4v5h-4zM684 228h4v5h-4zM250 233h4v6h-4zM280 233h4v6h-4zM284 233h4v6h-4zM352 233h4v6h-4zM356 233h4v6h-4zM411 233h5v6h-5zM445 233h5v6h-5zM539 233h4v6h-4zM603 233h4v6h-4zM662 233h5v6h-5zM246 239h4v5h-4zM263 239h4v5h-4zM365 239h4v5h-4zM424 239h4v5h-4zM445 239h5v5h-5zM458 239h4v5h-4zM616 239h4v5h-4zM637 239h4v5h-4zM709 239h4v5h-4zM756 239h4v5h-4zM246 244h4v5h-4zM297 244h4v5h-4zM314 244h4v5h-4zM331 244h4v5h-4zM369 244h4v5h-4zM390 244h4v5h-4zM399 244h4v5h-4zM458 244h4v5h-4zM543 244h5v5h-5zM569 244h4v5h-4zM628 244h5v5h-5zM675 244h4v5h-4zM722 244h4v5h-4zM305 249h4v5h-4zM314 249h4v5h-4zM390 249h4v5h-4zM394 249h5v5h-5zM411 249h5v5h-5zM454 249h4v5h-4zM471 249h4v5h-4zM475 249h4v5h-4zM518 249h4v5h-4zM535 249h4v5h-4zM569 249h4v5h-4zM616 249h4v5h-4zM267 254h4v5h-4zM271 254h4v5h-4zM305 254h4v5h-4zM369 254h4v5h-4zM535 254h4v5h-4zM692 254h4v5h-4zM237 259h4v6h-4zM267 259h4v6h-4zM386 259h4v6h-4zM403 259h4v6h-4zM475 259h4v6h-4zM488 259h4v6h-4zM688 259h4v6h-4zM692 259h4v6h-4zM267 265h4v5h-4zM280 265h4v5h-4zM288 265h4v5h-4zM305 265h4v5h-4zM331 265h4v5h-4zM356 265h4v5h-4zM450 265h4v5h-4zM492 265h4v5h-4zM505 265h4v5h-4zM548 265h4v5h-4zM569 265h4v5h-4zM603 265h4v5h-4zM701 265h4v5h-4zM760 265h4v5h-4zM348 270h4v5h-4zM437 270h4v5h-4zM441 270h4v5h-4zM531 270h4v5h-4zM543 270h5v5h-5zM590 270h4v5h-4zM594 270h5v5h-5zM620 270h4v5h-4zM624 270h4v5h-4zM667 270h4v5h-4zM747 270h5v5h-5zM764 270h5v5h-5zM322 275h4v5h-4zM437 275h4v5h-4zM594 275h5v5h-5zM603 275h4v5h-4zM611 275h5v5h-5zM616 275h4v5h-4zM658 275h4v5h-4zM760 275h4v5h-4zM297 280h4v5h-4zM301 280h4v5h-4zM424 280h4v5h-4zM454 280h4v5h-4zM509 280h5v5h-5zM565 280h4v5h-4zM590 280h4v5h-4zM667 280h4v5h-4zM675 280h4v5h-4zM705 280h4v5h-4zM760 280h4v5h-4zM764 280h5v5h-5zM267 285h4v6h-4zM280 285h4v6h-4zM314 285h4v6h-4zM348 285h4v6h-4zM377 285h5v6h-5zM390 285h4v6h-4zM441 285h4v6h-4zM488 285h4v6h-4zM501 285h4v6h-4zM509 285h5v6h-5zM548 285h4v6h-4zM590 285h4v6h-4zM611 285h5v6h-5zM637 285h4v6h-4zM641 285h4v6h-4zM688 285h4v6h-4zM267 291h4v5h-4zM292 291h5v5h-5zM394 291h5v5h-5zM403 291h4v5h-4zM479 291h5v5h-5zM501 291h4v5h-4zM552 291h4v5h-4zM573 291h4v5h-4zM654 291h4v5h-4zM692 291h4v5h-4zM747 291h5v5h-5zM250 296h4v5h-4zM267 296h4v5h-4zM292 296h5v5h-5zM352 296h4v5h-4zM420 296h4v5h-4zM531 296h4v5h-4zM616 296h4v5h-4zM645 296h5v5h-5zM667 296h4v5h-4zM713 296h5v5h-5zM718 296h4v5h-4zM722 301h4v5h-4zM284 306h4v5h-4zM326 306h5v5h-5zM475 306h4v5h-4zM514 306h4v5h-4zM518 306h4v5h-4zM590 306h4v5h-4zM620 306h4v5h-4zM624 306h4v5h-4zM641 306h4v5h-4zM654 306h4v5h-4zM684 306h4v5h-4zM705 306h4v5h-4zM709 306h4v5h-4zM756 306h4v5h-4zM250 311h4v6h-4zM263 311h4v6h-4zM271 311h4v6h-4zM280 311h4v6h-4zM305 311h4v6h-4zM356 311h4v6h-4zM369 311h4v6h-4zM373 311h4v6h-4zM467 311h4v6h-4zM522 311h4v6h-4zM526 311h5v6h-5zM556 311h4v6h-4zM582 311h4v6h-4zM616 311h4v6h-4zM628 311h5v6h-5zM760 311h4v6h-4zM263 317h4v5h-4zM420 317h4v5h-4zM424 317h4v5h-4zM522 317h4v5h-4zM611 317h5v5h-5zM654 317h4v5h-4zM692 317h4v5h-4zM696 317h5v5h-5zM701 317h4v5h-4zM743 317h4v5h-4zM752 317h4v5h-4zM292 322h5v5h-5zM335 322h4v5h-4zM365 322h4v5h-4zM416 322h4v5h-4zM450 322h4v5h-4zM471 322h4v5h-4zM475 322h4v5h-4zM548 322h4v5h-4zM560 322h5v5h-5zM577 322h5v5h-5zM760 322h4v5h-4zM254 327h4v5h-4zM271 327h4v5h-4zM314 327h4v5h-4zM326 327h5v5h-5zM331 327h4v5h-4zM420 327h4v5h-4zM462 327h5v5h-5zM548 327h4v5h-4zM573 327h4v5h-4zM628 327h5v5h-5zM637 327h4v5h-4zM667 327h4v5h-4zM752 327h4v5h-4zM258 332h5v5h-5zM263 332h4v5h-4zM267 332h4v5h-4zM280 332h4v5h-4zM331 332h4v5h-4zM360 332h5v5h-5zM467 332h4v5h-4zM475 332h4v5h-4zM560 332h5v5h-5zM586 332h4v5h-4zM658 332h4v5h-4zM667 332h4v5h-4zM747 332h5v5h-5zM760 332h4v5h-4zM764 332h5v5h-5zM275 337h5v6h-5zM335 337h4v6h-4zM343 337h5v6h-5zM382 337h4v6h-4zM416 337h4v6h-4zM424 337h4v6h-4zM458 337h4v6h-4zM462 337h5v6h-5zM479 337h5v6h-5zM543 337h5v6h-5zM548 337h4v6h-4zM560 337h5v6h-5zM688 337h4v6h-4zM280 343h4v5h-4zM288 343h4v5h-4zM309 343h5v5h-5zM352 343h4v5h-4zM365 343h4v5h-4zM369 343h4v5h-4zM433 343h4v5h-4zM458 343h4v5h-4zM475 343h4v5h-4zM535 343h4v5h-4zM556 343h4v5h-4zM582 343h4v5h-4zM590 343h4v5h-4zM675 343h4v5h-4zM705 343h4v5h-4zM713 343h5v5h-5zM739 343h4v5h-4zM246 348h4v5h-4zM254 348h4v5h-4zM297 348h4v5h-4zM301 348h4v5h-4zM365 348h4v5h-4zM488 348h4v5h-4zM505 348h4v5h-4zM535 348h4v5h-4zM565 348h4v5h-4zM599 348h4v5h-4zM633 348h4v5h-4zM705 348h4v5h-4zM713 348h5v5h-5zM735 348h4v5h-4zM241 353h5v5h-5zM271 353h4v5h-4zM365 353h4v5h-4zM411 353h5v5h-5zM428 353h5v5h-5zM454 353h4v5h-4zM548 353h4v5h-4zM556 353h4v5h-4zM586 353h4v5h-4zM590 353h4v5h-4zM620 353h4v5h-4zM641 353h4v5h-4zM662 353h5v5h-5zM760 353h4v5h-4zM275 358h5v5h-5zM322 358h4v5h-4zM356 358h4v5h-4zM390 358h4v5h-4zM411 358h5v5h-5zM433 358h4v5h-4zM514 358h4v5h-4zM548 358h4v5h-4zM556 358h4v5h-4zM594 358h5v5h-5zM599 358h4v5h-4zM611 358h5v5h-5zM645 358h5v5h-5zM675 358h4v5h-4zM684 358h4v5h-4zM701 358h4v5h-4zM735 358h4v5h-4zM258 363h5v6h-5zM356 363h4v6h-4zM369 363h4v6h-4zM458 363h4v6h-4zM492 363h4v6h-4zM505 363h4v6h-4zM535 363h4v6h-4zM539 363h4v6h-4zM671 363h4v6h-4zM735 363h4v6h-4zM769 363h4v6h-4zM237 369h4v5h-4zM271 369h4v5h-4zM292 369h5v5h-5zM331 369h4v5h-4zM377 369h5v5h-5zM390 369h4v5h-4zM394 369h5v5h-5zM399 369h4v5h-4zM407 369h4v5h-4zM441 369h4v5h-4zM450 369h4v5h-4zM599 369h4v5h-4zM603 369h4v5h-4zM658 369h4v5h-4zM692 369h4v5h-4zM726 369h4v5h-4zM735 369h4v5h-4z"/>
<path fill="#00ffff" d="M263 207h4v6h-4zM288 207h4v6h-4zM339 207h4v6h-4zM352 207h4v6h-4zM373 207h4v6h-4zM382 207h4v6h-4zM428 207h5v6h-5zM441 207h4v6h-4zM505 207h4v6h-4zM526 207h5v6h-5zM582 207h4v6h-4zM654 207h4v6h-4zM667 207h4v6h-4zM263 213h4v5h-4zM275 213h5v5h-5zM280 213h4v5h-4zM292 213h5v5h-5zM305 213h4v5h-4zM360 213h5v5h-5zM365 213h4v5h-4zM445 213h5v5h-5zM471 213h4v5h-4zM475 213h4v5h-4zM505 213h4v5h-4zM637 213h4v5h-4zM641 213h4v5h-4zM688 213h4v5h-4zM701 213h4v5h-4zM705 213h4v5h-4zM267 218h4v5h-4zM280 218h4v5h-4zM411 218h5v5h-5zM420 218h4v5h-4zM603 218h4v5h-4zM718 218h4v5h-4zM237 223h4v5h-4zM322 223h4v5h-4zM407 223h4v5h-4zM479 223h5v5h-5zM624 223h4v5h-4zM637 223h4v5h-4zM756 223h4v5h-4zM267 228h4v5h-4zM331 228h4v5h-4zM373 228h4v5h-4zM484 228h4v5h-4zM501 228h4v5h-4zM552 228h4v5h-4zM641 228h4v5h-4zM688 228h4v5h-4zM696 228h5v5h-5zM769 228h4v5h-4zM301 233h4v6h-4zM377 233h5v6h-5zM390 233h4v6h-4zM471 233h4v6h-4zM492 233h4v6h-4zM590 233h4v6h-4zM599 233h4v6h-4zM637 233h4v6h-4zM679 233h5v6h-5zM701 233h4v6h-4zM705 233h4v6h-4zM709 233h4v6h-4zM743 233h4v6h-4zM275 239h5v5h-5zM382 239h4v5h-4zM390 239h4v5h-4zM556 239h4v5h-4zM594 239h5v5h-5zM726 239h4v5h-4zM339 244h4v5h-4zM373 244h4v5h-4zM403 244h4v5h-4zM505 244h4v5h-4zM577 244h5v5h-5zM616 244h4v5h-4zM637 244h4v5h-4zM752 244h4v5h-4zM237 249h4v5h-4zM284 249h4v5h-4zM356 249h4v5h-4zM484 249h4v5h-4zM543 249h5v5h-5zM603 249h4v5h-4zM637 249h4v5h-4zM747 249h5v5h-5zM756 249h4v5h-4zM377 254h5v5h-5zM386 254h4v5h-4zM526 254h5v5h-5zM603 254h4v5h-4zM667 254h4v5h-4zM671 254h4v5h-4zM696 254h5v5h-5zM246 259h4v6h-4zM254 259h4v6h-4zM288 259h4v6h-4zM309 259h5v6h-5zM314 259h4v6h-4zM373 259h4v6h-4zM382 259h4v6h-4zM407 259h4v6h-4zM454 259h4v6h-4zM467 259h4v6h-4zM522 259h4v6h-4zM599 259h4v6h-4zM633 259h4v6h-4zM645 259h5v6h-5zM701 259h4v6h-4zM722 259h4v6h-4zM309 265h5v5h-5zM326 265h5v5h-5zM348 265h4v5h-4zM365 265h4v5h-4zM411 265h5v5h-5zM458 265h4v5h-4zM565 265h4v5h-4zM607 265h4v5h-4zM667 265h4v5h-4zM752 265h4v5h-4zM254 270h4v5h-4zM301 270h4v5h-4zM339 270h4v5h-4zM360 270h5v5h-5zM386 270h4v5h-4zM433 270h4v5h-4zM488 270h4v5h-4zM633 270h4v5h-4zM637 270h4v5h-4zM722 270h4v5h-4zM752 270h4v5h-4zM263 275h4v5h-4zM275 275h5v5h-5zM390 275h4v5h-4zM399 275h4v5h-4zM479 275h5v5h-5zM492 275h4v5h-4zM543 275h5v5h-5zM590 275h4v5h-4zM705 275h4v5h-4zM309 280h5v5h-5zM360 280h5v5h-5zM407 280h4v5h-4zM531 280h4v5h-4zM607 280h4v5h-4zM611 280h5v5h-5zM684 280h4v5h-4zM292 285h5v6h-5zM365 285h4v6h-4zM403 285h4v6h-4zM454 285h4v6h-4zM492 285h4v6h-4zM675 285h4v6h-4zM679 285h5v6h-5zM696 285h5v6h-5zM747 285h5v6h-5zM760 285h4v6h-4zM769 285h4v6h-4zM246 291h4v5h-4zM322 291h4v5h-4zM360 291h5v5h-5zM416 291h4v5h-4zM420 291h4v5h-4zM441 291h4v5h-4zM458 291h4v5h-4zM539 291h4v5h-4zM560 291h5v5h-5zM607 291h4v5h-4zM633 291h4v5h-4zM667 291h4v5h-4zM679 291h5v5h-5zM730 291h5v5h-5zM739 291h4v5h-4zM764 291h5v5h-5zM280 296h4v5h-4zM309 296h5v5h-5zM314 296h4v5h-4zM318 296h4v5h-4zM365 296h4v5h-4zM373 296h4v5h-4zM454 296h4v5h-4zM501 296h4v5h-4zM509 296h5v5h-5zM539 296h4v5h-4zM560 296h5v5h-5zM582 296h4v5h-4zM684 296h4v5h-4zM739 296h4v5h-4zM254 306h4v5h-4zM263 306h4v5h-4zM314 306h4v5h-4zM428 306h5v5h-5zM526 306h5v5h-5zM543 306h5v5h-5zM603 306h4v5h-4zM747 306h5v5h-5zM284 311h4v6h-4zM288 311h4v6h-4zM314 311h4v6h-4zM352 311h4v6h-4zM599 311h4v6h-4zM764 311h5v6h-5zM769 311h4v6h-4zM322 317h4v5h-4zM360 317h5v5h-5zM365 317h4v5h-4zM416 317h4v5h-4zM496 317h5v5h-5zM671 317h4v5h-4zM713 317h5v5h-5zM246 322h4v5h-4zM326 322h5v5h-5zM437 322h4v5h-4zM509 322h5v5h-5zM526 322h5v5h-5zM654 322h4v5h-4zM284 327h4v5h-4zM386 327h4v5h-4zM475 327h4v5h-4zM518 327h4v5h-4zM552 327h4v5h-4zM722 327h4v5h-4zM726 327h4v5h-4zM246 332h4v5h-4zM390 332h4v5h-4zM471 332h4v5h-4zM484 332h4v5h-4zM543 332h5v5h-5zM548 332h4v5h-4zM331 337h4v6h-4zM352 337h4v6h-4zM433 337h4v6h-4zM492 337h4v6h-4zM539 337h4v6h-4zM662 337h5v6h-5zM671 337h4v6h-4zM760 337h4v6h-4zM263 343h4v5h-4zM326 343h5v5h-5zM377 343h5v5h-5zM441 343h4v5h-4zM488 343h4v5h-4zM735 343h4v5h-4zM760 343h4v5h-4zM241 348h5v5h-5zM305 348h4v5h-4zM314 348h4v5h-4zM326 348h5v5h-5zM331 348h4v5h-4zM411 348h5v5h-5zM492 348h4v5h-4zM692 348h4v5h-4zM267 353h4v5h-4zM284 353h4v5h-4zM331 353h4v5h-4zM496 353h5v5h-5zM675 353h4v5h-4zM241 358h5v5h-5zM254 358h4v5h-4zM331 358h4v5h-4zM335 358h4v5h-4zM348 358h4v5h-4zM424 358h4v5h-4zM471 358h4v5h-4zM565 358h4v5h-4zM624 358h4v5h-4zM705 358h4v5h-4zM739 358h4v5h-4zM322 363h4v6h-4zM339 363h4v6h-4zM382 363h4v6h-4zM420 363h4v6h-4zM454 363h4v6h-4zM479 363h5v6h-5zM667 363h4v6h-4zM339 369h4v5h-4zM356 369h4v5h-4zM360 369h5v5h-5zM365 369h4v5h-4zM454 369h4v5h-4z"/>
<path fill="#ff3200" d="M301 207h4v6h-4zM365 207h4v6h-4zM620 207h4v6h-4zM271 213h4v5h-4zM382 213h4v5h-4zM509 213h5v5h-5zM565 213h4v5h-4zM696 213h5v5h-5zM735 213h4v5h-4zM305 218h4v5h-4zM309 218h5v5h-5zM352 218h4v5h-4zM428 218h5v5h-5zM454 218h4v5h-4zM492 218h4v5h-4zM565 218h4v5h-4zM675 218h4v5h-4zM726 218h4v5h-4zM730 218h5v5h-5zM752 218h4v5h-4zM764 218h5v5h-5zM305 223h4v5h-4zM309 223h5v5h-5zM365 223h4v5h-4zM420 223h4v5h-4zM552 223h4v5h-4zM667 223h4v5h-4zM688 223h4v5h-4zM241 228h5v5h-5zM271 228h4v5h-4zM292 228h5v5h-5zM437 228h4v5h-4zM471 228h4v5h-4zM586 228h4v5h-4zM701 228h4v5h-4zM348 233h4v6h-4zM624 233h4v6h-4zM641 233h4v6h-4zM671 233h4v6h-4zM722 233h4v6h-4zM258 239h5v5h-5zM335 239h4v5h-4zM531 239h4v5h-4zM760 239h4v5h-4zM764 239h5v5h-5zM352 244h4v5h-4zM360 244h5v5h-5zM416 244h4v5h-4zM433 244h4v5h-4zM450 244h4v5h-4zM565 244h4v5h-4zM726 244h4v5h-4zM318 249h4v5h-4zM369 249h4v5h-4zM399 249h4v5h-4zM403 249h4v5h-4zM458 249h4v5h-4zM577 249h5v5h-5zM688 249h4v5h-4zM365 254h4v5h-4zM471 254h4v5h-4zM573 254h4v5h-4zM586 254h4v5h-4zM739 254h4v5h-4zM539 259h4v6h-4zM620 259h4v6h-4zM658 259h4v6h-4zM241 265h5v5h-5zM246 265h4v5h-4zM254 265h4v5h-4zM339 265h4v5h-4zM386 265h4v5h-4zM424 265h4v5h-4zM573 265h4v5h-4zM250 270h4v5h-4zM462 270h5v5h-5zM560 270h5v5h-5zM692 270h4v5h-4zM246 275h4v5h-4zM292 275h5v5h-5zM441 275h4v5h-4zM505 275h4v5h-4zM573 275h4v5h-4zM718 275h4v5h-4zM275 280h5v5h-5zM314 280h4v5h-4zM441 280h4v5h-4zM450 280h4v5h-4zM650 280h4v5h-4zM739 280h4v5h-4zM254 285h4v6h-4zM263 285h4v6h-4zM416 285h4v6h-4zM433 285h4v6h-4zM335 291h4v5h-4zM369 291h4v5h-4zM399 291h4v5h-4zM424 291h4v5h-4zM454 291h4v5h-4zM522 291h4v5h-4zM565 291h4v5h-4zM582 291h4v5h-4zM399 296h4v5h-4zM492 296h4v5h-4zM603 296h4v5h-4zM658 296h4v5h-4zM730 296h5v5h-5zM369 301h4v5h-4zM382 301h4v5h-4zM394 301h5v5h-5zM756 301h4v5h-4zM288 306h4v5h-4zM565 306h4v5h-4zM573 306h4v5h-4zM241 311h5v6h-5zM343 311h5v6h-5zM399 311h4v6h-4zM416 311h4v6h-4zM450 311h4v6h-4zM484 311h4v6h-4zM488 311h4v6h-4zM590 311h4v6h-4zM292 317h5v5h-5zM399 317h4v5h-4zM471 317h4v5h-4zM573 317h4v5h-4zM620 317h4v5h-4zM628 317h5v5h-5zM730 322h5v5h-5zM756 322h4v5h-4zM309 327h5v5h-5zM411 327h5v5h-5zM458 327h4v5h-4zM471 327h4v5h-4zM488 327h4v5h-4zM671 327h4v5h-4zM743 327h4v5h-4zM301 332h4v5h-4zM335 332h4v5h-4zM348 332h4v5h-4zM382 332h4v5h-4zM386 332h4v5h-4zM437 332h4v5h-4zM488 332h4v5h-4zM573 332h4v5h-4zM654 332h4v5h-4zM267 337h4v6h-4zM369 337h4v6h-4zM475 337h4v6h-4zM713 337h5v6h-5zM331 343h4v5h-4zM394 343h5v5h-5zM718 343h4v5h-4zM756 343h4v5h-4zM394 348h5v5h-5zM462 348h5v5h-5zM467 348h4v5h-4zM730 348h5v5h-5zM479 353h5v5h-5zM509 353h5v5h-5zM747 353h5v5h-5zM309 358h5v5h-5zM526 363h5v6h-5zM573 363h4v6h-4zM730 363h5v6h-5zM760 363h4v6h-4zM267 369h4v5h-4zM309 369h5v5h-5zM569 369h4v5h-4zM607 369h4v5h-4zM620 369h4v5h-4zM628 369h5v5h-5zM675 369h4v5h-4zM760 369h4v5h-4z"/>
<path fill="#50ffaf" d="M314 207h4v6h-4zM326 207h5v6h-5zM479 207h5v6h-5zM539 207h4v6h-4zM560 207h5v6h-5zM616 207h4v6h-4zM641 207h4v6h-4zM645 207h5v6h-5zM679 207h5v6h-5zM701 207h4v6h-4zM407 213h4v5h-4zM616 213h4v5h-4zM620 213h4v5h-4zM246 218h4v5h-4zM416 218h4v5h-4zM462 218h5v5h-5zM548 218h4v5h-4zM586 218h4v5h-4zM722 218h4v5h-4zM326 223h5v5h-5zM454 223h4v5h-4zM458 223h4v5h-4zM543 223h5v5h-5zM565 223h4v5h-4zM577 223h5v5h-5zM603 223h4v5h-4zM641 223h4v5h-4zM645 223h5v5h-5zM662 223h5v5h-5zM696 223h5v5h-5zM258 228h5v5h-5zM275 228h5v5h-5zM280 228h4v5h-4zM297 228h4v5h-4zM348 228h4v5h-4zM382 228h4v5h-4zM399 228h4v5h-4zM526 228h5v5h-5zM539 228h4v5h-4zM573 228h4v5h-4zM611 228h5v5h-5zM645 228h5v5h-5zM671 228h4v5h-4zM764 228h5v5h-5zM326 233h5v6h-5zM360 233h5v6h-5zM365 233h4v6h-4zM420 233h4v6h-4zM424 233h4v6h-4zM428 233h5v6h-5zM522 233h4v6h-4zM607 233h4v6h-4zM620 233h4v6h-4zM713 233h5v6h-5zM501 239h4v5h-4zM548 239h4v5h-4zM667 239h4v5h-4zM356 244h4v5h-4zM365 244h4v5h-4zM407 244h4v5h-4zM424 244h4v5h-4zM437 244h4v5h-4zM526 244h5v5h-5zM603 244h4v5h-4zM620 244h4v5h-4zM641 244h4v5h-4zM684 244h4v5h-4zM760 244h4v5h-4zM246 249h4v5h-4zM335 249h4v5h-4zM348 249h4v5h-4zM526 249h5v5h-5zM607 249h4v5h-4zM764 249h5v5h-5zM352 254h4v5h-4zM394 254h5v5h-5zM445 254h5v5h-5zM475 254h4v5h-4zM565 254h4v5h-4zM658 254h4v5h-4zM688 254h4v5h-4zM756 254h4v5h-4zM760 254h4v5h-4zM301 259h4v6h-4zM348 259h4v6h-4zM369 259h4v6h-4zM582 259h4v6h-4zM624 259h4v6h-4zM705 259h4v6h-4zM394 265h5v5h-5zM420 265h4v5h-4zM624 265h4v5h-4zM671 265h4v5h-4zM713 265h5v5h-5zM747 265h5v5h-5zM246 270h4v5h-4zM565 270h4v5h-4zM309 275h5v5h-5zM501 275h4v5h-4zM531 275h4v5h-4zM599 275h4v5h-4zM735 275h4v5h-4zM254 280h4v5h-4zM514 280h4v5h-4zM522 280h4v5h-4zM556 280h4v5h-4zM637 280h4v5h-4zM743 280h4v5h-4zM237 285h4v6h-4zM246 285h4v6h-4zM331 285h4v6h-4zM382 285h4v6h-4zM701 285h4v6h-4zM735 285h4v6h-4zM263 291h4v5h-4zM428 291h5v5h-5zM475 291h4v5h-4zM590 291h4v5h-4zM662 291h5v5h-5zM403 296h4v5h-4zM569 296h4v5h-4zM701 296h4v5h-4zM705 296h4v5h-4zM726 296h4v5h-4zM735 296h4v5h-4zM760 296h4v5h-4zM437 306h4v5h-4zM633 306h4v5h-4zM688 306h4v5h-4zM739 306h4v5h-4zM565 311h4v6h-4zM573 311h4v6h-4zM577 311h5v6h-5zM658 311h4v6h-4zM250 317h4v5h-4zM326 317h5v5h-5zM343 317h5v5h-5zM403 317h4v5h-4zM450 317h4v5h-4zM475 317h4v5h-4zM424 322h4v5h-4zM650 322h4v5h-4zM667 322h4v5h-4zM709 322h4v5h-4zM752 322h4v5h-4zM394 327h5v5h-5zM399 327h4v5h-4zM577 327h5v5h-5zM594 327h5v5h-5zM692 327h4v5h-4zM730 327h5v5h-5zM756 327h4v5h-4zM420 332h4v5h-4zM424 332h4v5h-4zM450 332h4v5h-4zM539 332h4v5h-4zM616 332h4v5h-4zM624 332h4v5h-4zM718 332h4v5h-4zM509 337h5v6h-5zM522 337h4v6h-4zM645 337h5v6h-5zM679 337h5v6h-5zM722 337h4v6h-4zM241 343h5v5h-5zM445 343h5v5h-5zM450 343h4v5h-4zM611 343h5v5h-5zM650 343h4v5h-4zM654 343h4v5h-4zM662 343h5v5h-5zM696 343h5v5h-5zM709 343h4v5h-4zM747 343h5v5h-5zM322 348h4v5h-4zM373 348h4v5h-4zM501 348h4v5h-4zM509 348h5v5h-5zM531 348h4v5h-4zM573 348h4v5h-4zM637 348h4v5h-4zM641 348h4v5h-4zM688 348h4v5h-4zM726 348h4v5h-4zM292 353h5v5h-5zM309 353h5v5h-5zM569 353h4v5h-4zM658 353h4v5h-4zM718 353h4v5h-4zM726 353h4v5h-4zM752 353h4v5h-4zM764 353h5v5h-5zM314 358h4v5h-4zM407 358h4v5h-4zM437 358h4v5h-4zM441 358h4v5h-4zM560 358h5v5h-5zM662 358h5v5h-5zM275 363h5v6h-5zM352 363h4v6h-4zM365 363h4v6h-4zM416 363h4v6h-4zM428 363h5v6h-5zM518 363h4v6h-4zM599 363h4v6h-4zM620 363h4v6h-4zM662 363h5v6h-5zM701 363h4v6h-4zM246 369h4v5h-4zM373 369h4v5h-4zM573 369h4v5h-4zM611 369h5v5h-5z"/>
<path fill="#0000e9" d="M318 207h4v6h-4zM343 207h5v6h-5zM501 207h4v6h-4zM543 207h5v6h-5zM565 207h4v6h-4zM735 207h4v6h-4zM756 207h4v6h-4zM246 213h4v5h-4zM267 213h4v5h-4zM322 213h4v5h-4zM339 213h4v5h-4zM394 213h5v5h-5zM450 213h4v5h-4zM458 213h4v5h-4zM518 213h4v5h-4zM539 213h4v5h-4zM552 213h4v5h-4zM560 213h5v5h-5zM573 213h4v5h-4zM577 213h5v5h-5zM582 213h4v5h-4zM590 213h4v5h-4zM692 213h4v5h-4zM722 213h4v5h-4zM739 213h4v5h-4zM747 213h5v5h-5zM250 218h4v5h-4zM254 218h4v5h-4zM297 218h4v5h-4zM360 218h5v5h-5zM382 218h4v5h-4zM394 218h5v5h-5zM424 218h4v5h-4zM445 218h5v5h-5zM496 218h5v5h-5zM509 218h5v5h-5zM514 218h4v5h-4zM522 218h4v5h-4zM539 218h4v5h-4zM556 218h4v5h-4zM560 218h5v5h-5zM628 218h5v5h-5zM645 218h5v5h-5zM650 218h4v5h-4zM684 218h4v5h-4zM692 218h4v5h-4zM756 218h4v5h-4zM246 223h4v5h-4zM275 223h5v5h-5zM280 223h4v5h-4zM343 223h5v5h-5zM356 223h4v5h-4zM386 223h4v5h-4zM390 223h4v5h-4zM394 223h5v5h-5zM501 223h4v5h-4zM518 223h4v5h-4zM560 223h5v5h-5zM599 223h4v5h-4zM654 223h4v5h-4zM658 223h4v5h-4zM671 223h4v5h-4zM250 228h4v5h-4zM263 228h4v5h-4zM284 228h4v5h-4zM305 228h4v5h-4zM356 228h4v5h-4zM365 228h4v5h-4zM369 228h4v5h-4zM403 228h4v5h-4zM416 228h4v5h-4zM433 228h4v5h-4zM445 228h5v5h-5zM458 228h4v5h-4zM462 228h5v5h-5zM467 228h4v5h-4zM488 228h4v5h-4zM492 228h4v5h-4zM548 228h4v5h-4zM616 228h4v5h-4zM620 228h4v5h-4zM637 228h4v5h-4zM654 228h4v5h-4zM667 228h4v5h-4zM692 228h4v5h-4zM709 228h4v5h-4zM722 228h4v5h-4zM730 228h5v5h-5zM747 228h5v5h-5zM756 228h4v5h-4zM331 233h4v6h-4zM369 233h4v6h-4zM373 233h4v6h-4zM403 233h4v6h-4zM454 233h4v6h-4zM462 233h5v6h-5zM467 233h4v6h-4zM475 233h4v6h-4zM484 233h4v6h-4zM501 233h4v6h-4zM565 233h4v6h-4zM573 233h4v6h-4zM577 233h5v6h-5zM582 233h4v6h-4zM586 233h4v6h-4zM594 233h5v6h-5zM654 233h4v6h-4zM696 233h5v6h-5zM739 233h4v6h-4zM756 233h4v6h-4zM760 233h4v6h-4zM764 233h5v6h-5zM241 239h5v5h-5zM267 239h4v5h-4zM301 239h4v5h-4zM309 239h5v5h-5zM339 239h4v5h-4zM343 239h5v5h-5zM348 239h4v5h-4zM360 239h5v5h-5zM399 239h4v5h-4zM428 239h5v5h-5zM433 239h4v5h-4zM454 239h4v5h-4zM462 239h5v5h-5zM484 239h4v5h-4zM492 239h4v5h-4zM526 239h5v5h-5zM582 239h4v5h-4zM624 239h4v5h-4zM658 239h4v5h-4zM688 239h4v5h-4zM735 239h4v5h-4zM254 244h4v5h-4zM326 244h5v5h-5zM343 244h5v5h-5zM348 244h4v5h-4zM411 244h5v5h-5zM471 244h4v5h-4zM501 244h4v5h-4zM590 244h4v5h-4zM594 244h5v5h-5zM607 244h4v5h-4zM645 244h5v5h-5zM650 244h4v5h-4zM688 244h4v5h-4zM696 244h5v5h-5zM730 244h5v5h-5zM735 244h4v5h-4zM743 244h4v5h-4zM756 244h4v5h-4zM241 249h5v5h-5zM263 249h4v5h-4zM267 249h4v5h-4zM288 249h4v5h-4zM377 249h5v5h-5zM407 249h4v5h-4zM428 249h5v5h-5zM437 249h4v5h-4zM441 249h4v5h-4zM467 249h4v5h-4zM488 249h4v5h-4zM505 249h4v5h-4zM522 249h4v5h-4zM573 249h4v5h-4zM599 249h4v5h-4zM624 249h4v5h-4zM641 249h4v5h-4zM645 249h5v5h-5zM650 249h4v5h-4zM654 249h4v5h-4zM684 249h4v5h-4zM705 249h4v5h-4zM713 249h5v5h-5zM718 249h4v5h-4zM722 249h4v5h-4zM743 249h4v5h-4zM760 249h4v5h-4zM237 254h4v5h-4zM250 254h4v5h-4zM275 254h5v5h-5zM297 254h4v5h-4zM318 254h4v5h-4zM326 254h5v5h-5zM331 254h4v5h-4zM343 254h5v5h-5zM373 254h4v5h-4zM399 254h4v5h-4zM403 254h4v5h-4zM411 254h5v5h-5zM424 254h4v5h-4zM450 254h4v5h-4zM484 254h4v5h-4zM488 254h4v5h-4zM492 254h4v5h-4zM556 254h4v5h-4zM569 254h4v5h-4zM611 254h5v5h-5zM620 254h4v5h-4zM633 254h4v5h-4zM662 254h5v5h-5zM675 254h4v5h-4zM743 254h4v5h-4zM764 254h5v5h-5zM769 254h4v5h-4zM241 259h5v6h-5zM271 259h4v6h-4zM275 259h5v6h-5zM284 259h4v6h-4zM318 259h4v6h-4zM343 259h5v6h-5zM352 259h4v6h-4zM424 259h4v6h-4zM484 259h4v6h-4zM492 259h4v6h-4zM526 259h5v6h-5zM560 259h5v6h-5zM684 259h4v6h-4zM718 259h4v6h-4zM237 265h4v5h-4zM263 265h4v5h-4zM275 265h5v5h-5zM297 265h4v5h-4zM301 265h4v5h-4zM318 265h4v5h-4zM360 265h5v5h-5zM377 265h5v5h-5zM454 265h4v5h-4zM467 265h4v5h-4zM471 265h4v5h-4zM475 265h4v5h-4zM514 265h4v5h-4zM531 265h4v5h-4zM539 265h4v5h-4zM594 265h5v5h-5zM599 265h4v5h-4zM658 265h4v5h-4zM662 265h5v5h-5zM679 265h5v5h-5zM684 265h4v5h-4zM756 265h4v5h-4zM297 270h4v5h-4zM314 270h4v5h-4zM318 270h4v5h-4zM322 270h4v5h-4zM335 270h4v5h-4zM369 270h4v5h-4zM479 270h5v5h-5zM522 270h4v5h-4zM526 270h5v5h-5zM548 270h4v5h-4zM556 270h4v5h-4zM599 270h4v5h-4zM603 270h4v5h-4zM611 270h5v5h-5zM616 270h4v5h-4zM654 270h4v5h-4zM662 270h5v5h-5zM688 270h4v5h-4zM701 270h4v5h-4zM713 270h5v5h-5zM718 270h4v5h-4zM730 270h5v5h-5zM756 270h4v5h-4zM760 270h4v5h-4zM267 275h4v5h-4zM297 275h4v5h-4zM305 275h4v5h-4zM348 275h4v5h-4zM403 275h4v5h-4zM450 275h4v5h-4zM475 275h4v5h-4zM509 275h5v5h-5zM539 275h4v5h-4zM556 275h4v5h-4zM577 275h5v5h-5zM582 275h4v5h-4zM671 275h4v5h-4zM696 275h5v5h-5zM713 275h5v5h-5zM730 275h5v5h-5zM747 275h5v5h-5zM237 280h4v5h-4zM241 280h5v5h-5zM258 280h5v5h-5zM267 280h4v5h-4zM280 280h4v5h-4zM322 280h4v5h-4zM335 280h4v5h-4zM348 280h4v5h-4zM352 280h4v5h-4zM403 280h4v5h-4zM411 280h5v5h-5zM475 280h4v5h-4zM501 280h4v5h-4zM526 280h5v5h-5zM548 280h4v5h-4zM569 280h4v5h-4zM577 280h5v5h-5zM586 280h4v5h-4zM594 280h5v5h-5zM599 280h4v5h-4zM603 280h4v5h-4zM624 280h4v5h-4zM654 280h4v5h-4zM662 280h5v5h-5zM671 280h4v5h-4zM688 280h4v5h-4zM696 280h5v5h-5zM713 280h5v5h-5zM722 280h4v5h-4zM275 285h5v6h-5zM305 285h4v6h-4zM318 285h4v6h-4zM326 285h5v6h-5zM343 285h5v6h-5zM352 285h4v6h-4zM360 285h5v6h-5zM373 285h4v6h-4zM407 285h4v6h-4zM420 285h4v6h-4zM424 285h4v6h-4zM437 285h4v6h-4zM475 285h4v6h-4zM479 285h5v6h-5zM514 285h4v6h-4zM526 285h5v6h-5zM560 285h5v6h-5zM582 285h4v6h-4zM594 285h5v6h-5zM620 285h4v6h-4zM624 285h4v6h-4zM645 285h5v6h-5zM658 285h4v6h-4zM662 285h5v6h-5zM684 285h4v6h-4zM722 285h4v6h-4zM752 285h4v6h-4zM764 285h5v6h-5zM280 291h4v5h-4zM326 291h5v5h-5zM339 291h4v5h-4zM343 291h5v5h-5zM348 291h4v5h-4zM352 291h4v5h-4zM365 291h4v5h-4zM390 291h4v5h-4zM450 291h4v5h-4zM488 291h4v5h-4zM492 291h4v5h-4zM514 291h4v5h-4zM599 291h4v5h-4zM624 291h4v5h-4zM641 291h4v5h-4zM650 291h4v5h-4zM671 291h4v5h-4zM701 291h4v5h-4zM722 291h4v5h-4zM735 291h4v5h-4zM769 291h4v5h-4zM237 296h4v5h-4zM297 296h4v5h-4zM331 296h4v5h-4zM335 296h4v5h-4zM339 296h4v5h-4zM343 296h5v5h-5zM369 296h4v5h-4zM411 296h5v5h-5zM428 296h5v5h-5zM462 296h5v5h-5zM471 296h4v5h-4zM505 296h4v5h-4zM552 296h4v5h-4zM565 296h4v5h-4zM611 296h5v5h-5zM620 296h4v5h-4zM628 296h5v5h-5zM637 296h4v5h-4zM650 296h4v5h-4zM662 296h5v5h-5zM671 296h4v5h-4zM675 296h4v5h-4zM679 296h5v5h-5zM709 296h4v5h-4zM747 296h5v5h-5zM769 296h4v5h-4zM373 301h4v5h-4zM454 301h4v5h-4zM556 301h4v5h-4zM594 301h5v5h-5zM250 306h4v5h-4zM305 306h4v5h-4zM331 306h4v5h-4zM339 306h4v5h-4zM343 306h5v5h-5zM382 306h4v5h-4zM386 306h4v5h-4zM407 306h4v5h-4zM433 306h4v5h-4zM467 306h4v5h-4zM569 306h4v5h-4zM607 306h4v5h-4zM752 306h4v5h-4zM297 311h4v6h-4zM301 311h4v6h-4zM326 311h5v6h-5zM339 311h4v6h-4zM377 311h5v6h-5zM407 311h4v6h-4zM437 311h4v6h-4zM454 311h4v6h-4zM462 311h5v6h-5zM518 311h4v6h-4zM535 311h4v6h-4zM539 311h4v6h-4zM569 311h4v6h-4zM603 311h4v6h-4zM637 311h4v6h-4zM641 311h4v6h-4zM650 311h4v6h-4zM654 311h4v6h-4zM662 311h5v6h-5zM667 311h4v6h-4zM679 311h5v6h-5zM709 311h4v6h-4zM743 311h4v6h-4zM756 311h4v6h-4zM254 317h4v5h-4zM267 317h4v5h-4zM275 317h5v5h-5zM280 317h4v5h-4zM288 317h4v5h-4zM297 317h4v5h-4zM356 317h4v5h-4zM437 317h4v5h-4zM458 317h4v5h-4zM479 317h5v5h-5zM526 317h5v5h-5zM531 317h4v5h-4zM543 317h5v5h-5zM560 317h5v5h-5zM569 317h4v5h-4zM603 317h4v5h-4zM607 317h4v5h-4zM645 317h5v5h-5zM684 317h4v5h-4zM709 317h4v5h-4zM718 317h4v5h-4zM747 317h5v5h-5zM241 322h5v5h-5zM254 322h4v5h-4zM271 322h4v5h-4zM297 322h4v5h-4zM309 322h5v5h-5zM339 322h4v5h-4zM360 322h5v5h-5zM377 322h5v5h-5zM394 322h5v5h-5zM407 322h4v5h-4zM441 322h4v5h-4zM445 322h5v5h-5zM479 322h5v5h-5zM518 322h4v5h-4zM522 322h4v5h-4zM543 322h5v5h-5zM552 322h4v5h-4zM569 322h4v5h-4zM599 322h4v5h-4zM607 322h4v5h-4zM641 322h4v5h-4zM662 322h5v5h-5zM679 322h5v5h-5zM684 322h4v5h-4zM701 322h4v5h-4zM735 322h4v5h-4zM258 327h5v5h-5zM267 327h4v5h-4zM305 327h4v5h-4zM365 327h4v5h-4zM377 327h5v5h-5zM403 327h4v5h-4zM407 327h4v5h-4zM428 327h5v5h-5zM433 327h4v5h-4zM454 327h4v5h-4zM467 327h4v5h-4zM535 327h4v5h-4zM590 327h4v5h-4zM599 327h4v5h-4zM611 327h5v5h-5zM650 327h4v5h-4zM658 327h4v5h-4zM684 327h4v5h-4zM705 327h4v5h-4zM709 327h4v5h-4zM718 327h4v5h-4zM739 327h4v5h-4zM769 327h4v5h-4zM250 332h4v5h-4zM326 332h5v5h-5zM365 332h4v5h-4zM373 332h4v5h-4zM433 332h4v5h-4zM445 332h5v5h-5zM462 332h5v5h-5zM501 332h4v5h-4zM509 332h5v5h-5zM565 332h4v5h-4zM582 332h4v5h-4zM607 332h4v5h-4zM611 332h5v5h-5zM633 332h4v5h-4zM641 332h4v5h-4zM645 332h5v5h-5zM662 332h5v5h-5zM671 332h4v5h-4zM679 332h5v5h-5zM684 332h4v5h-4zM701 332h4v5h-4zM713 332h5v5h-5zM722 332h4v5h-4zM743 332h4v5h-4zM246 337h4v6h-4zM263 337h4v6h-4zM284 337h4v6h-4zM292 337h5v6h-5zM297 337h4v6h-4zM301 337h4v6h-4zM309 337h5v6h-5zM356 337h4v6h-4zM365 337h4v6h-4zM386 337h4v6h-4zM420 337h4v6h-4zM441 337h4v6h-4zM445 337h5v6h-5zM454 337h4v6h-4zM518 337h4v6h-4zM531 337h4v6h-4zM569 337h4v6h-4zM590 337h4v6h-4zM624 337h4v6h-4zM637 337h4v6h-4zM641 337h4v6h-4zM675 337h4v6h-4zM692 337h4v6h-4zM705 337h4v6h-4zM718 337h4v6h-4zM730 337h5v6h-5zM735 337h4v6h-4zM769 337h4v6h-4zM292 343h5v5h-5zM305 343h4v5h-4zM373 343h4v5h-4zM386 343h4v5h-4zM407 343h4v5h-4zM420 343h4v5h-4zM462 343h5v5h-5zM471 343h4v5h-4zM492 343h4v5h-4zM509 343h5v5h-5zM522 343h4v5h-4zM616 343h4v5h-4zM620 343h4v5h-4zM641 343h4v5h-4zM645 343h5v5h-5zM667 343h4v5h-4zM671 343h4v5h-4zM743 343h4v5h-4zM752 343h4v5h-4zM280 348h4v5h-4zM284 348h4v5h-4zM288 348h4v5h-4zM292 348h5v5h-5zM335 348h4v5h-4zM343 348h5v5h-5zM352 348h4v5h-4zM382 348h4v5h-4zM390 348h4v5h-4zM403 348h4v5h-4zM428 348h5v5h-5zM441 348h4v5h-4zM484 348h4v5h-4zM518 348h4v5h-4zM548 348h4v5h-4zM552 348h4v5h-4zM560 348h5v5h-5zM586 348h4v5h-4zM611 348h5v5h-5zM616 348h4v5h-4zM654 348h4v5h-4zM662 348h5v5h-5zM671 348h4v5h-4zM679 348h5v5h-5zM696 348h5v5h-5zM764 348h5v5h-5zM254 353h4v5h-4zM280 353h4v5h-4zM288 353h4v5h-4zM297 353h4v5h-4zM314 353h4v5h-4zM352 353h4v5h-4zM360 353h5v5h-5zM386 353h4v5h-4zM403 353h4v5h-4zM407 353h4v5h-4zM424 353h4v5h-4zM445 353h5v5h-5zM450 353h4v5h-4zM501 353h4v5h-4zM535 353h4v5h-4zM594 353h5v5h-5zM603 353h4v5h-4zM607 353h4v5h-4zM611 353h5v5h-5zM624 353h4v5h-4zM628 353h5v5h-5zM650 353h4v5h-4zM667 353h4v5h-4zM671 353h4v5h-4zM688 353h4v5h-4zM709 353h4v5h-4zM713 353h5v5h-5zM258 358h5v5h-5zM263 358h4v5h-4zM267 358h4v5h-4zM271 358h4v5h-4zM280 358h4v5h-4zM288 358h4v5h-4zM301 358h4v5h-4zM305 358h4v5h-4zM326 358h5v5h-5zM352 358h4v5h-4zM450 358h4v5h-4zM454 358h4v5h-4zM501 358h4v5h-4zM509 358h5v5h-5zM535 358h4v5h-4zM569 358h4v5h-4zM586 358h4v5h-4zM590 358h4v5h-4zM616 358h4v5h-4zM654 358h4v5h-4zM658 358h4v5h-4zM671 358h4v5h-4zM679 358h5v5h-5zM696 358h5v5h-5zM713 358h5v5h-5zM722 358h4v5h-4zM743 358h4v5h-4zM747 358h5v5h-5zM752 358h4v5h-4zM764 358h5v5h-5zM263 363h4v6h-4zM305 363h4v6h-4zM318 363h4v6h-4zM348 363h4v6h-4zM377 363h5v6h-5zM399 363h4v6h-4zM407 363h4v6h-4zM411 363h5v6h-5zM433 363h4v6h-4zM441 363h4v6h-4zM450 363h4v6h-4zM462 363h5v6h-5zM467 363h4v6h-4zM471 363h4v6h-4zM475 363h4v6h-4zM514 363h4v6h-4zM522 363h4v6h-4zM548 363h4v6h-4zM552 363h4v6h-4zM556 363h4v6h-4zM565 363h4v6h-4zM569 363h4v6h-4zM577 363h5v6h-5zM582 363h4v6h-4zM586 363h4v6h-4zM603 363h4v6h-4zM628 363h5v6h-5zM633 363h4v6h-4zM645 363h5v6h-5zM675 363h4v6h-4zM705 363h4v6h-4zM718 363h4v6h-4zM726 363h4v6h-4zM764 363h5v6h-5zM280 369h4v5h-4zM305 369h4v5h-4zM326 369h5v5h-5zM369 369h4v5h-4zM386 369h4v5h-4zM411 369h5v5h-5zM428 369h5v5h-5zM437 369h4v5h-4zM458 369h4v5h-4zM484 369h4v5h-4zM501 369h4v5h-4zM539 369h4v5h-4zM577 369h5v5h-5zM594 369h5v5h-5zM616 369h4v5h-4zM641 369h4v5h-4zM662 369h5v5h-5zM679 369h5v5h-5zM701 369h4v5h-4zM718 369h4v5h-4zM752 369h4v5h-4zM764 369h5v5h-5z"/>
<path fill="#ff8200" d="M322 207h4v6h-4zM377 207h5v6h-5zM424 207h4v6h-4zM437 207h4v6h-4zM445 207h5v6h-5zM462 207h5v6h-5zM637 207h4v6h-4zM662 207h5v6h-5zM718 207h4v6h-4zM752 207h4v6h-4zM760 207h4v6h-4zM284 213h4v5h-4zM297 213h4v5h-4zM326 213h5v5h-5zM331 213h4v5h-4zM348 213h4v5h-4zM428 213h5v5h-5zM479 213h5v5h-5zM526 213h5v5h-5zM556 213h4v5h-4zM628 213h5v5h-5zM654 213h4v5h-4zM658 213h4v5h-4zM675 213h4v5h-4zM718 213h4v5h-4zM726 213h4v5h-4zM752 213h4v5h-4zM275 218h5v5h-5zM284 218h4v5h-4zM348 218h4v5h-4zM573 218h4v5h-4zM582 218h4v5h-4zM637 218h4v5h-4zM671 218h4v5h-4zM713 218h5v5h-5zM250 223h4v5h-4zM369 223h4v5h-4zM411 223h5v5h-5zM433 223h4v5h-4zM492 223h4v5h-4zM522 223h4v5h-4zM526 223h5v5h-5zM535 223h4v5h-4zM611 223h5v5h-5zM650 223h4v5h-4zM679 223h5v5h-5zM246 228h4v5h-4zM254 228h4v5h-4zM322 228h4v5h-4zM352 228h4v5h-4zM424 228h4v5h-4zM428 228h5v5h-5zM713 228h5v5h-5zM726 228h4v5h-4zM739 228h4v5h-4zM241 233h5v6h-5zM271 233h4v6h-4zM292 233h5v6h-5zM518 233h4v6h-4zM531 233h4v6h-4zM628 233h5v6h-5zM718 233h4v6h-4zM726 233h4v6h-4zM254 239h4v5h-4zM280 239h4v5h-4zM284 239h4v5h-4zM314 239h4v5h-4zM407 239h4v5h-4zM509 239h5v5h-5zM560 239h5v5h-5zM569 239h4v5h-4zM590 239h4v5h-4zM607 239h4v5h-4zM675 239h4v5h-4zM752 239h4v5h-4zM301 244h4v5h-4zM441 244h4v5h-4zM445 244h5v5h-5zM454 244h4v5h-4zM462 244h5v5h-5zM509 244h5v5h-5zM531 244h4v5h-4zM548 244h4v5h-4zM586 244h4v5h-4zM599 244h4v5h-4zM747 244h5v5h-5zM254 249h4v5h-4zM258 249h5v5h-5zM322 249h4v5h-4zM360 249h5v5h-5zM365 249h4v5h-4zM479 249h5v5h-5zM556 249h4v5h-4zM582 249h4v5h-4zM662 249h5v5h-5zM709 249h4v5h-4zM769 249h4v5h-4zM246 254h4v5h-4zM284 254h4v5h-4zM356 254h4v5h-4zM360 254h5v5h-5zM458 254h4v5h-4zM518 254h4v5h-4zM522 254h4v5h-4zM548 254h4v5h-4zM560 254h5v5h-5zM594 254h5v5h-5zM599 254h4v5h-4zM701 254h4v5h-4zM726 254h4v5h-4zM331 259h4v6h-4zM399 259h4v6h-4zM411 259h5v6h-5zM437 259h4v6h-4zM445 259h5v6h-5zM501 259h4v6h-4zM543 259h5v6h-5zM552 259h4v6h-4zM590 259h4v6h-4zM603 259h4v6h-4zM628 259h5v6h-5zM709 259h4v6h-4zM752 259h4v6h-4zM433 265h4v5h-4zM441 265h4v5h-4zM522 265h4v5h-4zM526 265h5v5h-5zM535 265h4v5h-4zM552 265h4v5h-4zM582 265h4v5h-4zM590 265h4v5h-4zM611 265h5v5h-5zM654 265h4v5h-4zM675 265h4v5h-4zM722 265h4v5h-4zM726 265h4v5h-4zM743 265h4v5h-4zM764 265h5v5h-5zM263 270h4v5h-4zM331 270h4v5h-4zM352 270h4v5h-4zM356 270h4v5h-4zM475 270h4v5h-4zM509 270h5v5h-5zM535 270h4v5h-4zM586 270h4v5h-4zM250 275h4v5h-4zM271 275h4v5h-4zM301 275h4v5h-4zM326 275h5v5h-5zM352 275h4v5h-4zM365 275h4v5h-4zM424 275h4v5h-4zM462 275h5v5h-5zM535 275h4v5h-4zM548 275h4v5h-4zM641 275h4v5h-4zM679 275h5v5h-5zM692 275h4v5h-4zM722 275h4v5h-4zM250 280h4v5h-4zM339 280h4v5h-4zM365 280h4v5h-4zM390 280h4v5h-4zM394 280h5v5h-5zM420 280h4v5h-4zM437 280h4v5h-4zM458 280h4v5h-4zM492 280h4v5h-4zM535 280h4v5h-4zM616 280h4v5h-4zM641 280h4v5h-4zM658 280h4v5h-4zM752 280h4v5h-4zM271 285h4v6h-4zM411 285h5v6h-5zM445 285h5v6h-5zM484 285h4v6h-4zM505 285h4v6h-4zM518 285h4v6h-4zM522 285h4v6h-4zM599 285h4v6h-4zM726 285h4v6h-4zM254 291h4v5h-4zM356 291h4v5h-4zM377 291h5v5h-5zM484 291h4v5h-4zM637 291h4v5h-4zM645 291h5v5h-5zM658 291h4v5h-4zM675 291h4v5h-4zM688 291h4v5h-4zM696 291h5v5h-5zM705 291h4v5h-4zM709 291h4v5h-4zM263 296h4v5h-4zM326 296h5v5h-5zM348 296h4v5h-4zM641 296h4v5h-4zM722 296h4v5h-4zM258 306h5v5h-5zM360 306h5v5h-5zM365 306h4v5h-4zM462 306h5v5h-5zM488 306h4v5h-4zM501 306h4v5h-4zM560 306h5v5h-5zM586 306h4v5h-4zM637 306h4v5h-4zM658 306h4v5h-4zM722 306h4v5h-4zM764 306h5v5h-5zM267 311h4v6h-4zM292 311h5v6h-5zM335 311h4v6h-4zM382 311h4v6h-4zM411 311h5v6h-5zM420 311h4v6h-4zM433 311h4v6h-4zM552 311h4v6h-4zM611 311h5v6h-5zM620 311h4v6h-4zM696 311h5v6h-5zM314 317h4v5h-4zM382 317h4v5h-4zM407 317h4v5h-4zM445 317h5v5h-5zM488 317h4v5h-4zM492 317h4v5h-4zM514 317h4v5h-4zM548 317h4v5h-4zM552 317h4v5h-4zM565 317h4v5h-4zM582 317h4v5h-4zM586 317h4v5h-4zM633 317h4v5h-4zM679 317h5v5h-5zM722 317h4v5h-4zM250 322h4v5h-4zM301 322h4v5h-4zM331 322h4v5h-4zM348 322h4v5h-4zM390 322h4v5h-4zM420 322h4v5h-4zM454 322h4v5h-4zM458 322h4v5h-4zM488 322h4v5h-4zM501 322h4v5h-4zM505 322h4v5h-4zM556 322h4v5h-4zM616 322h4v5h-4zM624 322h4v5h-4zM250 327h4v5h-4zM275 327h5v5h-5zM288 327h4v5h-4zM348 327h4v5h-4zM509 327h5v5h-5zM539 327h4v5h-4zM543 327h5v5h-5zM582 327h4v5h-4zM624 327h4v5h-4zM675 327h4v5h-4zM688 327h4v5h-4zM696 327h5v5h-5zM747 327h5v5h-5zM309 332h5v5h-5zM318 332h4v5h-4zM590 332h4v5h-4zM675 332h4v5h-4zM705 332h4v5h-4zM739 332h4v5h-4zM752 332h4v5h-4zM258 337h5v6h-5zM280 337h4v6h-4zM305 337h4v6h-4zM339 337h4v6h-4zM411 337h5v6h-5zM501 337h4v6h-4zM552 337h4v6h-4zM556 337h4v6h-4zM582 337h4v6h-4zM603 337h4v6h-4zM611 337h5v6h-5zM628 337h5v6h-5zM667 337h4v6h-4zM739 337h4v6h-4zM747 337h5v6h-5zM301 343h4v5h-4zM343 343h5v5h-5zM360 343h5v5h-5zM454 343h4v5h-4zM514 343h4v5h-4zM552 343h4v5h-4zM624 343h4v5h-4zM688 343h4v5h-4zM730 343h5v5h-5zM764 343h5v5h-5zM769 343h4v5h-4zM258 348h5v5h-5zM263 348h4v5h-4zM339 348h4v5h-4zM522 348h4v5h-4zM539 348h4v5h-4zM577 348h5v5h-5zM275 353h5v5h-5zM339 353h4v5h-4zM437 353h4v5h-4zM458 353h4v5h-4zM467 353h4v5h-4zM531 353h4v5h-4zM539 353h4v5h-4zM560 353h5v5h-5zM616 353h4v5h-4zM692 353h4v5h-4zM739 353h4v5h-4zM246 358h4v5h-4zM250 358h4v5h-4zM377 358h5v5h-5zM394 358h5v5h-5zM416 358h4v5h-4zM428 358h5v5h-5zM577 358h5v5h-5zM603 358h4v5h-4zM620 358h4v5h-4zM241 363h5v6h-5zM246 363h4v6h-4zM301 363h4v6h-4zM394 363h5v6h-5zM424 363h4v6h-4zM484 363h4v6h-4zM501 363h4v6h-4zM560 363h5v6h-5zM624 363h4v6h-4zM679 363h5v6h-5zM713 363h5v6h-5zM743 363h4v6h-4zM747 363h5v6h-5zM254 369h4v5h-4zM288 369h4v5h-4zM318 369h4v5h-4zM348 369h4v5h-4zM352 369h4v5h-4zM403 369h4v5h-4zM650 369h4v5h-4zM709 369h4v5h-4z"/>
<path fill="#fffa00" d="M390 207h4v6h-4zM411 207h5v6h-5zM514 207h4v6h-4zM531 207h4v6h-4zM569 207h4v6h-4zM603 207h4v6h-4zM730 207h5v6h-5zM747 207h5v6h-5zM764 207h5v6h-5zM288 213h4v5h-4zM514 213h4v5h-4zM535 213h4v5h-4zM603 213h4v5h-4zM650 213h4v5h-4zM713 213h5v5h-5zM288 218h4v5h-4zM318 218h4v5h-4zM484 218h4v5h-4zM518 218h4v5h-4zM624 218h4v5h-4zM743 218h4v5h-4zM292 223h5v5h-5zM701 223h4v5h-4zM747 223h5v5h-5zM752 223h4v5h-4zM360 228h5v5h-5zM394 228h5v5h-5zM441 228h4v5h-4zM450 228h4v5h-4zM479 228h5v5h-5zM505 228h4v5h-4zM518 228h4v5h-4zM556 228h4v5h-4zM565 228h4v5h-4zM624 228h4v5h-4zM633 228h4v5h-4zM705 228h4v5h-4zM743 228h4v5h-4zM297 233h4v6h-4zM309 233h5v6h-5zM505 233h4v6h-4zM535 233h4v6h-4zM645 233h5v6h-5zM752 233h4v6h-4zM297 239h4v5h-4zM356 239h4v5h-4zM377 239h5v5h-5zM543 239h5v5h-5zM603 239h4v5h-4zM620 239h4v5h-4zM692 239h4v5h-4zM769 239h4v5h-4zM241 244h5v5h-5zM263 244h4v5h-4zM271 244h4v5h-4zM428 244h5v5h-5zM582 244h4v5h-4zM633 244h4v5h-4zM679 244h5v5h-5zM301 249h4v5h-4zM382 249h4v5h-4zM386 249h4v5h-4zM539 249h4v5h-4zM594 249h5v5h-5zM620 249h4v5h-4zM735 249h4v5h-4zM314 254h4v5h-4zM407 254h4v5h-4zM590 254h4v5h-4zM616 254h4v5h-4zM637 254h4v5h-4zM292 259h5v6h-5zM365 259h4v6h-4zM390 259h4v6h-4zM462 259h5v6h-5zM569 259h4v6h-4zM577 259h5v6h-5zM679 259h5v6h-5zM730 259h5v6h-5zM343 265h5v5h-5zM407 265h4v5h-4zM462 265h5v5h-5zM479 265h5v5h-5zM509 265h5v5h-5zM518 265h4v5h-4zM394 270h5v5h-5zM428 270h5v5h-5zM573 270h4v5h-4zM735 270h4v5h-4zM314 275h4v5h-4zM445 275h5v5h-5zM620 275h4v5h-4zM684 275h4v5h-4zM764 275h5v5h-5zM373 280h4v5h-4zM377 280h5v5h-5zM543 280h5v5h-5zM301 285h4v6h-4zM339 285h4v6h-4zM356 285h4v6h-4zM531 285h4v6h-4zM569 285h4v6h-4zM667 285h4v6h-4zM671 285h4v6h-4zM713 285h5v6h-5zM250 291h4v5h-4zM271 291h4v5h-4zM284 291h4v5h-4zM437 291h4v5h-4zM586 291h4v5h-4zM616 291h4v5h-4zM305 296h4v5h-4zM590 296h4v5h-4zM594 296h5v5h-5zM696 296h5v5h-5zM688 301h4v5h-4zM246 306h4v5h-4zM275 306h5v5h-5zM309 306h5v5h-5zM373 306h4v5h-4zM445 306h5v5h-5zM539 306h4v5h-4zM582 306h4v5h-4zM650 306h4v5h-4zM662 306h5v5h-5zM275 311h5v6h-5zM322 311h4v6h-4zM394 311h5v6h-5zM501 311h4v6h-4zM645 311h5v6h-5zM675 311h4v6h-4zM705 311h4v6h-4zM258 317h5v5h-5zM386 317h4v5h-4zM594 317h5v5h-5zM599 317h4v5h-4zM688 317h4v5h-4zM705 317h4v5h-4zM352 322h4v5h-4zM382 322h4v5h-4zM411 322h5v5h-5zM531 322h4v5h-4zM586 322h4v5h-4zM633 322h4v5h-4zM696 322h5v5h-5zM718 322h4v5h-4zM292 327h5v5h-5zM352 327h4v5h-4zM569 327h4v5h-4zM620 327h4v5h-4zM633 327h4v5h-4zM645 327h5v5h-5zM654 327h4v5h-4zM377 332h5v5h-5zM394 332h5v5h-5zM399 332h4v5h-4zM526 332h5v5h-5zM569 332h4v5h-4zM709 332h4v5h-4zM726 332h4v5h-4zM756 332h4v5h-4zM769 332h4v5h-4zM326 337h5v6h-5zM360 337h5v6h-5zM373 337h4v6h-4zM594 337h5v6h-5zM616 337h4v6h-4zM654 337h4v6h-4zM258 343h5v5h-5zM314 343h4v5h-4zM348 343h4v5h-4zM539 343h4v5h-4zM633 343h4v5h-4zM658 343h4v5h-4zM679 343h5v5h-5zM237 348h4v5h-4zM275 348h5v5h-5zM348 348h4v5h-4zM369 348h4v5h-4zM420 348h4v5h-4zM424 348h4v5h-4zM454 348h4v5h-4zM594 348h5v5h-5zM624 348h4v5h-4zM650 348h4v5h-4zM658 348h4v5h-4zM263 353h4v5h-4zM301 353h4v5h-4zM369 353h4v5h-4zM399 353h4v5h-4zM416 353h4v5h-4zM582 353h4v5h-4zM701 353h4v5h-4zM705 353h4v5h-4zM769 353h4v5h-4zM292 358h5v5h-5zM318 358h4v5h-4zM382 358h4v5h-4zM420 358h4v5h-4zM467 358h4v5h-4zM484 358h4v5h-4zM492 358h4v5h-4zM505 358h4v5h-4zM688 358h4v5h-4zM250 363h4v6h-4zM309 363h5v6h-5zM386 363h4v6h-4zM543 363h5v6h-5zM654 363h4v6h-4zM739 363h4v6h-4zM322 369h4v5h-4zM416 369h4v5h-4zM462 369h5v5h-5zM471 369h4v5h-4zM479 369h5v5h-5zM518 369h4v5h-4zM543 369h5v5h-5zM548 369h4v5h-4zM556 369h4v5h-4zM560 369h5v5h-5zM654 369h4v5h-4zM667 369h4v5h-4zM713 369h5v5h-5z"/>
<path fill="#ffbe00" d="M496 207h5v6h-5zM496 228h5v5h-5zM254 301h4v5h-4zM582 301h4v5h-4zM658 301h4v5h-4zM496 369h5v5h-5z"/>
<path fill="#0023ff" d="M496 213h5v5h-5zM326 301h5v5h-5zM518 301h4v5h-4zM620 301h4v5h-4z"/>
<path fill="#dcff23" d="M496 223h5v5h-5zM356 301h4v5h-4zM496 358h5v5h-5z"/>
<path fill="#ff9600" d="M496 233h5v6h-5zM365 301h4v5h-4zM428 301h5v5h-5zM539 301h4v5h-4z"/>
<path fill="#00ebff" d="M496 244h5v5h-5z"/>
<path fill="#0000b7" d="M496 249h5v5h-5zM616 301h4v5h-4z"/>
<path fill="#960000" d="M496 254h5v5h-5zM471 301h4v5h-4zM531 301h4v5h-4z"/>
<path fill="#ff1e00" d="M496 259h5v6h-5zM475 301h4v5h-4zM496 301h5v5h-5zM705 301h4v5h-4z"/>
<path fill="#28ffd7" d="M496 265h5v5h-5zM445 301h5v5h-5zM641 301h4v5h-4zM675 301h4v5h-4zM726 301h4v5h-4z"/>
<path fill="#0000cb" d="M496 270h5v5h-5zM305 301h4v5h-4zM407 301h4v5h-4zM560 301h5v5h-5z"/>
<path fill="#ff5a00" d="M496 275h5v5h-5zM258 301h5v5h-5zM314 301h4v5h-4zM433 301h4v5h-4z"/>
<path fill="#0000fd" d="M496 280h5v5h-5zM237 301h4v5h-4zM301 301h4v5h-4zM552 301h4v5h-4zM496 322h5v5h-5z"/>
<path fill="#00008f" d="M496 285h5v6h-5zM569 301h4v5h-4zM599 301h4v5h-4z"/>
<path fill="#be0000" d="M496 291h5v5h-5zM607 301h4v5h-4z"/>
<path fill="#3cffc3" d="M496 296h5v5h-5zM543 301h5v5h-5zM548 301h4v5h-4zM696 301h5v5h-5z"/>
<path fill="#0000df" d="M246 301h4v5h-4zM352 301h4v5h-4z"/>
<path fill="#8c0000" d="M250 301h4v5h-4zM662 301h5v5h-5z"/>
<path fill="#000085" d="M263 301h4v5h-4zM650 301h4v5h-4z"/>
<path fill="#ffd200" d="M271 301h4v5h-4zM450 301h4v5h-4z"/>
<path fill="#00d7ff" d="M275 301h5v5h-5zM335 301h4v5h-4zM573 301h4v5h-4zM577 301h5v5h-5zM624 301h4v5h-4z"/>
<path fill="#ff4600" d="M280 301h4v5h-4zM399 301h4v5h-4zM424 301h4v5h-4z"/>
<path fill="#14ffeb" d="M288 301h4v5h-4zM505 301h4v5h-4zM692 301h4v5h-4zM743 301h4v5h-4z"/>
<path fill="#004bff" d="M292 301h5v5h-5z"/>
<path fill="#8cff73" d="M297 301h4v5h-4zM467 301h4v5h-4zM586 301h4v5h-4z"/>
<path fill="#f0ff0f" d="M309 301h5v5h-5zM654 301h4v5h-4z"/>
<path fill="#ff0a00" d="M318 301h4v5h-4zM637 301h4v5h-4zM709 301h4v5h-4zM760 301h4v5h-4z"/>
<path fill="#b40000" d="M322 301h4v5h-4zM565 301h4v5h-4zM747 301h5v5h-5zM496 348h5v5h-5z"/>
<path fill="#d20000" d="M331 301h4v5h-4zM628 301h5v5h-5zM496 343h5v5h-5z"/>
<path fill="#0073ff" d="M339 301h4v5h-4zM679 301h5v5h-5zM718 301h4v5h-4z"/>
<path fill="#0037ff" d="M343 301h5v5h-5zM441 301h4v5h-4z"/>
<path fill="#c8ff37" d="M348 301h4v5h-4zM526 301h5v5h-5zM496 327h5v5h-5zM496 332h5v5h-5z"/>
<path fill="#000fff" d="M360 301h5v5h-5z"/>
<path fill="#f00000" d="M377 301h5v5h-5zM735 301h4v5h-4z"/>
<path fill="#fa0000" d="M386 301h4v5h-4zM514 301h4v5h-4zM764 301h5v5h-5z"/>
<path fill="#0000d5" d="M403 301h4v5h-4zM522 301h4v5h-4zM496 363h5v6h-5z"/>
<path fill="#64ff9b" d="M411 301h5v5h-5zM420 301h4v5h-4z"/>
<path fill="#0000f3" d="M416 301h4v5h-4z"/>
<path fill="#dc0000" d="M437 301h4v5h-4zM667 301h4v5h-4z"/>
<path fill="#ffaa00" d="M458 301h4v5h-4z"/>
<path fill="#78ff87" d="M462 301h5v5h-5z"/>
<path fill="#0000a3" d="M479 301h5v5h-5zM496 311h5v6h-5z"/>
<path fill="#0000c1" d="M484 301h4v5h-4zM611 301h5v5h-5zM645 301h5v5h-5zM496 337h5v6h-5z"/>
<path fill="#005fff" d="M492 301h4v5h-4zM535 301h4v5h-4zM633 301h4v5h-4zM713 301h5v5h-5z"/>
<path fill="#0000ad" d="M501 301h4v5h-4z"/>
<path fill="#ffe600" d="M509 301h5v5h-5zM701 301h4v5h-4zM496 306h5v5h-5z"/>
<path fill="#820000" d="M603 301h4v5h-4z"/>
<path fill="#009bff" d="M671 301h4v5h-4zM730 301h5v5h-5zM739 301h4v5h-4z"/>
<path fill="#a0ff5f" d="M684 301h4v5h-4z"/>
</g>
<rect x="501" y="207" width="1" height="334" fill="#30d030" opacity="0.85"/>
<rect x="237" y="300.5" width="536.4" height="1" fill="#30d030" opacity="0.4"/>
<text x="225.5" y="236.1" font-size="9.5" text-anchor="end" textLength="36" lengthAdjust="spacingAndGlyphs">19.02.20</text>
<text x="225.5" y="247.1" font-size="9.5" text-anchor="end" textLength="36" lengthAdjust="spacingAndGlyphs">11:39:27</text>
<text x="225.5" y="288.1" font-size="9.5" text-anchor="end" textLength="36" lengthAdjust="spacingAndGlyphs">19.02.20</text>
<text x="225.5" y="299.1" font-size="9.5" text-anchor="end" textLength="36" lengthAdjust="spacingAndGlyphs">11:39:27</text>
<text x="225.5" y="340.2" font-size="9.5" text-anchor="end" textLength="36" lengthAdjust="spacingAndGlyphs">19.02.20</text>
<text x="225.5" y="351.2" font-size="9.5" text-anchor="end" textLength="36" lengthAdjust="spacingAndGlyphs">11:39:27</text>
<path d="M232.3 207.5H235.5M232.3 218.5H235.5M232.3 228.5H235.5M229.0 238.5H235.5M232.3 249.5H235.5M232.3 259.5H235.5M232.3 270.5H235.5M232.3 280.5H235.5M229.0 290.5H235.5M232.3 301.5H235.5M232.3 311.5H235.5M232.3 322.5H235.5M232.3 332.5H235.5M229.0 342.5H235.5M232.3 353.5H235.5M232.3 363.5H235.5M232.3 374.5H235.5M232.3 384.5H235.5M229.0 395.5H235.5M232.3 405.5H235.5M232.3 415.5H235.5M232.3 426.5H235.5M232.3 436.5H235.5M229.0 447.5H235.5M232.3 457.5H235.5M232.3 467.5H235.5M232.3 478.5H235.5M232.3 488.5H235.5M229.0 499.5H235.5M232.3 509.5H235.5M232.3 519.5H235.5M232.3 530.5H235.5" stroke="#000" stroke-width="1" fill="none" shape-rendering="crispEdges"/>
<rect x="235.0" y="207" width="1.0" height="334" fill="#000"/>
<text transform="translate(185,372.3) rotate(-90)" font-size="9.5" text-anchor="middle">Time</text>
<path d="M237 542.5H774M237.5 542V548M259.5 542V545M280.5 542V545M302.5 542V545M323.5 542V545M344.5 542V548M366.5 542V545M387.5 542V545M409.5 542V545M430.5 542V545M452.5 542V548M473.5 542V545M494.5 542V545M516.5 542V545M537.5 542V545M559.5 542V548M580.5 542V545M602.5 542V545M623.5 542V545M645.5 542V545M666.5 542V548M687.5 542V545M709.5 542V545M730.5 542V545M752.5 542V545M773.5 542V548" stroke="#000" stroke-width="1" fill="none" shape-rendering="crispEdges"/>
<text x="237.5" y="558.6" font-size="9.5" text-anchor="middle">0</text>
<text x="344.7" y="558.6" font-size="9.5" text-anchor="middle">100</text>
<text x="451.9" y="558.6" font-size="9.5" text-anchor="middle">200</text>
<text x="559.1" y="558.6" font-size="9.5" text-anchor="middle">300</text>
<text x="666.3" y="558.6" font-size="9.5" text-anchor="middle">400</text>
<text x="773.5" y="558.6" font-size="9.5" text-anchor="middle">500</text>
<text x="505.5" y="570.8" font-size="9.5" text-anchor="middle" textLength="52.6" lengthAdjust="spacingAndGlyphs">Distance (m)</text>
<rect x="775.9" y="207" width="14.4" height="333.8" fill="url(#cb)"/>
<rect x="791" y="207" width="1.6" height="334" fill="#8c8c8c"/>
<path d="M792.5 530.5h2.5M792.5 516.5h2.5M792.5 503.5h2.5M792.5 490.5h2.5M792.5 477.5h5M792.5 464.5h2.5M792.5 450.5h2.5M792.5 437.5h2.5M792.5 424.5h2.5M792.5 411.5h5M792.5 398.5h2.5M792.5 384.5h2.5M792.5 371.5h2.5M792.5 358.5h2.5M792.5 345.5h5M792.5 332.5h2.5M792.5 318.5h2.5M792.5 305.5h2.5M792.5 292.5h2.5M792.5 279.5h5M792.5 266.5h2.5M792.5 252.5h2.5M792.5 239.5h2.5M792.5 226.5h2.5M792.5 213.5h5" stroke="#000" stroke-width="1" fill="none" shape-rendering="crispEdges"/>
<text x="801.2" y="480.6" font-size="9.5">50</text>
<text x="801.2" y="414.6" font-size="9.5">100</text>
<text x="801.2" y="348.6" font-size="9.5">150</text>
<text x="801.2" y="282.6" font-size="9.5">200</text>
<text x="801.2" y="216.6" font-size="9.5">250</text>
<text transform="translate(821.5,373.5) rotate(90)" font-size="9.5" text-anchor="middle" textLength="72" lengthAdjust="spacingAndGlyphs">Temperature (°C)</text>
</svg></body></html>
